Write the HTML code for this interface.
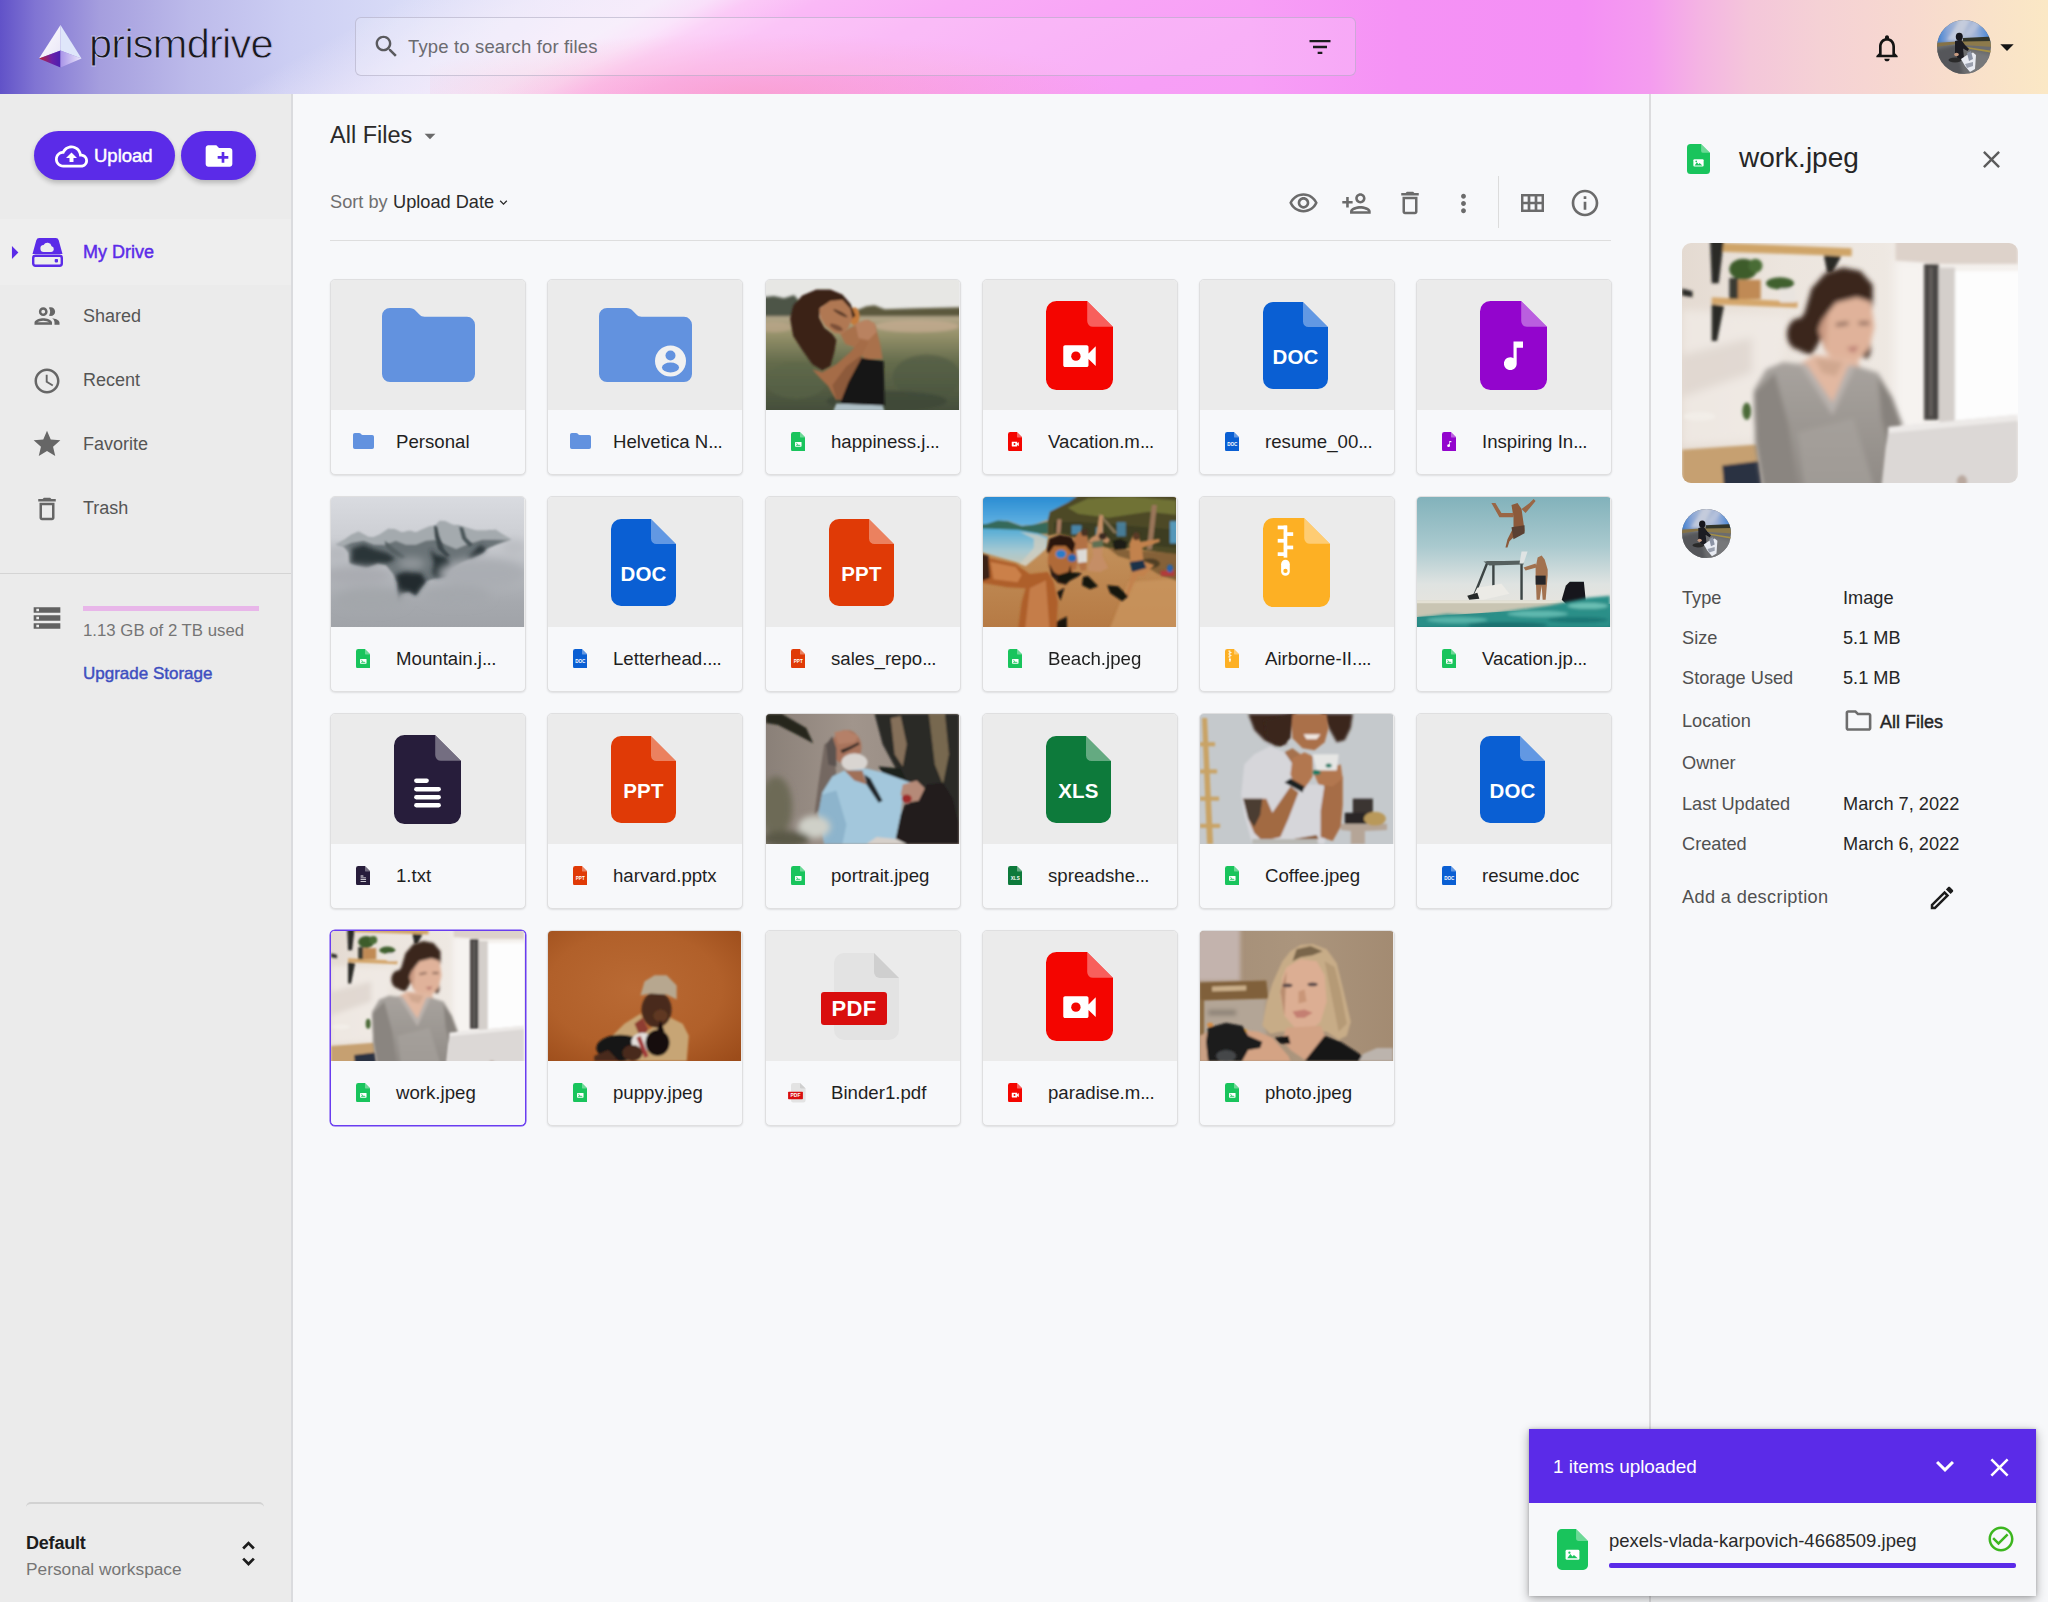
<!DOCTYPE html>
<html lang="en"><head><meta charset="utf-8"><title>prismdrive - All Files</title>
<style>
*{box-sizing:border-box;margin:0;padding:0}
html,body{width:2048px;height:1602px;overflow:hidden;background:#f7f8fa}
body{position:relative;font-family:"Liberation Sans",sans-serif;color:#212121}
.ab{position:absolute;display:block}
.t{white-space:nowrap}
.md{-webkit-text-stroke:.45px currentColor}
#hdr{left:0;top:0;width:2048px;height:94px;overflow:hidden;
 background:linear-gradient(90deg,#6152c8 0px,#8074d3 35px,#a59ede 100px,#bcbaea 190px,#cccef3 290px,#d8dbf7 400px,#e4e4f9 520px,#eeeafb 640px,#f3eefb 800px)}
#hdr .sk{left:400px;top:0;width:1100px;height:94px;transform-origin:0 0;transform:skewX(-61deg);
 background:linear-gradient(90deg,rgba(246,236,251,0) 0px,rgba(246,238,251,.55) 130px,rgba(247,236,251,.9) 260px,#f9e0fa 310px,#fbcaf7 350px,#fab9f6 420px,#f9adf6 560px,#f8a5f6 720px,#f79ff6 900px,#f69df6 1100px)}
#hdr .rt{left:1250px;top:0;width:798px;height:94px;
 background:linear-gradient(90deg,#f79ff6 0px,#f592f5 150px,#f48ff5 330px,#f49cef 400px,#f4b4e3 450px,#f4c6da 500px,#f5d1d5 570px,#f7d9cf 660px,#f9e2c9 740px,#fbe8c5 798px)}
#side{left:0;top:94px;width:293px;height:1508px;background:#ebebeb;border-right:2px solid #dadbde}
#rp{left:1649px;top:94px;width:399px;height:1508px;border-left:2px solid #dcdcde;background:#f7f8fa}
.card{position:absolute;width:196px;height:196px;border:1.5px solid #dfdfe0;border-radius:5px;background:#f7f8fa;overflow:hidden;box-shadow:0 1px 2px rgba(0,0,0,.10)}
.card.sel{border-color:#6a3df0;box-shadow:0 0 0 .5px #6a3df0}
.card .th,.card .ph{position:absolute;left:0;top:0;width:100%;height:130px;background:#ebebeb;overflow:hidden}
.card .ph svg{display:block}
.card>.ab{margin:-1.5px 0 0 -1.5px}
.nm{font-size:18.650px;line-height:24px;color:#1f1f1f}
.nm i{font-style:normal;letter-spacing:-.6px}
.lb{color:#555}
</style></head><body>

<div id="hdr" class="ab">
<div class="ab sk"></div><div class="ab rt"></div><div class="ab" style="left:430px;top:30px;width:800px;height:64px;background:radial-gradient(ellipse 46% 95% at 40% 100%,rgba(250,150,185,.55),rgba(250,150,190,0) 100%)"></div>
</div>
<svg class="ab" style="left:39px;top:25px" width="43" height="43" viewBox="0 0 43 43">
<defs><linearGradient id="lg1" x1="0" y1="0" x2="1" y2="1"><stop offset="0" stop-color="#ffffff"/><stop offset="1" stop-color="#e9e6f7"/></linearGradient>
<linearGradient id="lg2" x1="0" y1="0" x2="1" y2="0"><stop offset="0" stop-color="#c0242c"/><stop offset=".6" stop-color="#6a1fa8"/><stop offset="1" stop-color="#4a1fb0"/></linearGradient>
<linearGradient id="lg3" x1="0" y1="0" x2="1" y2="0"><stop offset="0" stop-color="#a894e8"/><stop offset="1" stop-color="#ece8fb"/></linearGradient></defs>
<path d="M21.5 0L0 33.500 21.500 25.500z" fill="url(#lg1)"/><path d="M21.5 0L42.500 33.500 21.500 25.500z" fill="#dfe6fa"/>
<path d="M0 33.5L21.5 25.5V42.500z" fill="url(#lg2)"/><path d="M42.5 33.5L21.5 25.5V42.500z" fill="url(#lg3)"/></svg>
<div class="ab t" style="left:89px;top:17px;font-size:41.5px;line-height:54px;letter-spacing:-.75px;color:#19191c;-webkit-text-stroke:.8px #c2c0ec">prismdrive</div>
<div class="ab" style="left:355px;top:17px;width:1001px;height:59px;border:1.5px solid rgba(170,165,190,.55);border-radius:6px;background:rgba(255,255,255,.18)"></div>
<svg class="ab" style="left:371.5px;top:32.0px" width="29" height="29" viewBox="0 0 24 24" ><path fill="#5a5a5e" d="M15.5 14h-.79l-.28-.27C15.41 12.59 16 11.11 16 9.5 16 5.91 13.09 3 9.5 3S3 5.91 3 9.5 5.91 16 9.5 16c1.61 0 3.09-.59 4.23-1.57l.27.28v.79l5 4.99L20.49 19l-4.99-5zm-6 0C7.01 14 5 11.99 5 9.5S7.01 5 9.5 5 14 7.01 14 9.5 11.99 14 9.5 14z"/></svg>
<div class="ab t " style="left:408px;top:35.0px;font-size:18.5px;line-height:24px;color:#6b6b70;letter-spacing:.15px">Type to search for files</div>
<svg class="ab" style="left:1306.0px;top:33.0px" width="28" height="28" viewBox="0 0 24 24" ><path fill="#1c1c1c" d="M10 18h4v-2h-4v2zM3 6v2h18V6H3zm3 7h12v-2H6v2z"/></svg>
<svg class="ab" style="left:1870.5px;top:32.0px" width="32" height="32" viewBox="0 0 24 24" ><path fill="#141414" d="M12 22c1.1 0 2-.9 2-2h-4c0 1.1.9 2 2 2zm6-6v-5c0-3.07-1.63-5.64-4.5-6.32V4c0-.83-.67-1.5-1.5-1.5s-1.5.67-1.5 1.5v.68C7.64 5.36 6 7.92 6 11v5l-2 2v1h16v-1l-2-2zm-2 1H8v-6c0-2.48 1.51-4.5 4-4.5s4 2.02 4 4.5v6z"/></svg>
<div class="ab" style="left:1937px;top:20px;width:54px;height:54px;border-radius:50%;overflow:hidden"><svg width="54" height="54" viewBox="0 0 54 54" preserveAspectRatio="none" style="display:block"><defs><linearGradient id="g1" x1="0" y1="0" x2="1" y2="0"><stop offset="0" stop-color="#2f78d0"/><stop offset="0.22" stop-color="#8aa6d6"/><stop offset="0.45" stop-color="#b4bed2"/><stop offset="0.7" stop-color="#9fb2d8"/><stop offset="1" stop-color="#2f7ad4"/></linearGradient><filter id="f2" x="-20%" y="-20%" width="140%" height="140%"><feGaussianBlur stdDeviation="0.6"/></filter><filter id="f3" x="-20%" y="-20%" width="140%" height="140%"><feGaussianBlur stdDeviation="1.6"/></filter></defs><rect x="0" y="0" width="54" height="54" fill="#6b6c6e" /><g filter="url(#f3)"><rect x="-2" y="-2" width="58" height="25" fill="url(#g1)" /><polygon points="10,20 24,-2 34,-2 22,20" fill="#c9d0de" opacity=".8"/><polygon points="26,16 40,-2 48,-2 34,16" fill="#c2cade" opacity=".6"/><polygon points="-2,30 20,25 26,56 -2,56" fill="#55565a" /><polygon points="30,30 56,36 56,56 34,56" fill="#77787a" /></g><g filter="url(#f2)"><polygon points="24,20.500 56,19.500 56,27 26,25" fill="#8c7a4b" /><polygon points="26,18 56,16.500 56,21 26,21.500" fill="#333629" /><polygon points="-2,23 20,21.500 20,24 -2,27" fill="#857246" /><polygon points="30,27 56,31 56,33 30,28.500" fill="#b59a3a" opacity=".8"/><ellipse cx="22.3" cy="16.8" rx="3.5" ry="4" fill="#15151b" /><polygon points="18,21 24,19.500 28,25 32,29 30.500,31 26,28.500 27,38 22,41 18,33" fill="#1a1a20" /><ellipse cx="19.5" cy="34.5" rx="2.3" ry="1.8" fill="#c79a80" /><ellipse cx="18" cy="40" rx="6.5" ry="2.4" fill="#2a2b2c" /><polygon points="24,39 30,35 36,32.500 39,35 38,49 33,52 28,46" fill="#e8ebf2" /><polygon points="30,33 34,31 36,39 32,41" fill="#8b93a5" /><polygon points="28,44 36,42 36,46 30,48" fill="#9aa0ae" /></g></svg></div>
<svg class="ab" style="left:1991.3px;top:31.3px" width="32" height="32" viewBox="0 0 24 24" ><path fill="#141414" d="M7 10l5 5 5-5z"/></svg>
<div id="side" class="ab"></div>
<div class="ab" style="left:34px;top:131px;width:141px;height:49px;border-radius:25px;background:#5b2be8;box-shadow:0 3px 5px rgba(0,0,0,.22)"></div>
<svg class="ab" style="left:55.0px;top:139.5px" width="33" height="33" viewBox="0 0 24 24" ><path fill="#fff" d="M19.35 10.04C18.67 6.59 15.64 4 12 4 9.11 4 6.6 5.64 5.35 8.04 2.34 8.36 0 10.91 0 14c0 3.31 2.69 6 6 6h13c2.76 0 5-2.24 5-5 0-2.64-2.05-4.78-4.65-4.96zM19 18H6c-2.21 0-4-1.79-4-4 0-2.05 1.53-3.76 3.56-3.97l1.07-.11.5-.95C8.08 7.14 9.94 6 12 6c2.62 0 4.88 1.86 5.39 4.43l.3 1.5 1.53.11c1.56.1 2.78 1.41 2.78 2.96 0 1.65-1.35 3-3 3zM8 13h2.55v3h2.9v-3H16l-4-4z"/></svg>
<div class="ab t md" style="left:94px;top:144.0px;font-size:18.5px;line-height:24px;color:#fff;">Upload</div>
<div class="ab" style="left:181px;top:131px;width:75px;height:49px;border-radius:25px;background:#5b2be8;box-shadow:0 3px 5px rgba(0,0,0,.22)"></div>
<svg class="ab" style="left:202.5px;top:140.0px" width="32" height="32" viewBox="0 0 24 24" ><path fill="#fff" d="M20 6h-8l-2-2H4c-1.11 0-1.99.89-1.99 2L2 18c0 1.11.89 2 2 2h16c1.11 0 2-.89 2-2V8c0-1.11-.89-2-2-2zm-1 8h-3v3h-2v-3h-3v-2h3V9h2v3h3v2z"/></svg>
<div class="ab" style="left:0;top:219px;width:291px;height:66px;background:#eeeeee"></div>
<svg class="ab" style="left:-0.7px;top:237.0px" width="31" height="31" viewBox="0 0 24 24" ><path fill="#5b2be8" d="M10 17l5-5-5-5v10z"/></svg>
<svg class="ab" style="left:32px;top:238px" width="31" height="29" viewBox="0 0 31 29">
<path fill="#5b2be8" d="M7.2 0h16.600a3 3 0 0 1 2.900 2.200L30.500 16H.5L4.300 2.200A3 3 0 0 1 7.200 0z"/>
<path fill="#eeeeee" d="M19.6 8.200a4.300 4.300 0 0 0-8-1.100A3.400 3.400 0 0 0 12 13.900h7.300a2.900 2.900 0 0 0 .3-5.700z"/>
<rect x="1.2" y="17.700" width="28.600" height="10" rx="2.200" fill="none" stroke="#5b2be8" stroke-width="2.400"/>
<rect x="22.7" y="21.100" width="3.300" height="3.300" rx=".8" fill="#5b2be8"/></svg>
<div class="ab t md" style="left:83px;top:240.5px;font-size:18px;line-height:23px;color:#5b2be8;">My Drive</div>
<svg class="ab" style="left:31.5px;top:301.0px" width="30" height="30" viewBox="0 0 24 24" ><path fill="#666" d="M9 13.75c-2.34 0-7 1.17-7 3.5V19h14v-1.75c0-2.33-4.66-3.5-7-3.5zM4.34 17c.84-.58 2.87-1.25 4.66-1.25s3.82.67 4.66 1.25H4.34zM9 12c1.93 0 3.5-1.57 3.5-3.5S10.93 5 9 5 5.5 6.57 5.5 8.5 7.07 12 9 12zm0-5c.83 0 1.5.67 1.5 1.5S9.83 10 9 10s-1.5-.67-1.5-1.5S8.17 7 9 7zm7.04 6.81c1.16.84 1.96 1.96 1.96 3.44V19h4v-1.75c0-2.02-3.5-3.17-5.96-3.44zM15 12c1.93 0 3.5-1.57 3.5-3.5S16.93 5 15 5c-.54 0-1.04.13-1.5.35.63.89 1 1.98 1 3.15s-.37 2.26-1 3.15c.46.22.96.35 1.5.35z"/></svg>
<div class="ab t " style="left:83px;top:304.5px;font-size:18px;line-height:23px;color:#555;">Shared</div>
<svg class="ab" style="left:31.5px;top:365.5px" width="30" height="30" viewBox="0 0 24 24" ><path fill="#666" d="M11.99 2C6.47 2 2 6.48 2 12s4.47 10 9.99 10C17.52 22 22 17.52 22 12S17.52 2 11.99 2zM12 20c-4.42 0-8-3.58-8-8s3.58-8 8-8 8 3.58 8 8-3.58 8-8 8zm.5-13H11v6l5.25 3.15.75-1.23-4.5-2.67z"/></svg>
<div class="ab t " style="left:83px;top:368.5px;font-size:18px;line-height:23px;color:#555;">Recent</div>
<svg class="ab" style="left:30.5px;top:428.0px" width="32" height="32" viewBox="0 0 24 24" ><path fill="#666" d="M12 17.27L18.18 21l-1.64-7.03L22 9.24l-7.19-.61L12 2 9.19 8.63 2 9.24l5.46 4.73L5.82 21z"/></svg>
<div class="ab t " style="left:83px;top:432.5px;font-size:18px;line-height:23px;color:#555;">Favorite</div>
<svg class="ab" style="left:31.5px;top:493.5px" width="30" height="30" viewBox="0 0 24 24" ><path fill="#666" d="M6 19c0 1.1.9 2 2 2h8c1.1 0 2-.9 2-2V7H6v12zM8 9h8v10H8V9zm7.5-5l-1-1h-5l-1 1H5v2h14V4z"/></svg>
<div class="ab t " style="left:83px;top:496.5px;font-size:18px;line-height:23px;color:#555;">Trash</div>
<div class="ab" style="left:0;top:572.5px;width:291px;height:1.500px;background:#d4d4d4"></div>
<svg class="ab" style="left:30.5px;top:602.0px" width="32" height="32" viewBox="0 0 24 24" ><path fill="#616161" d="M2 20h20v-4H2v4zm2-3h2v2H4v-2zM2 4v4h20V4H2zm4 3H4V5h2v2zm-4 7h20v-4H2v4zm2-3h2v2H4v-2z"/></svg>
<div class="ab" style="left:83px;top:606px;width:176px;height:4.500px;background:#e8b6e9"></div>
<div class="ab t " style="left:83px;top:619.5px;font-size:16.8px;line-height:22px;color:#757575;">1.13 GB of 2 TB used</div>
<div class="ab t md" style="left:83px;top:662.5px;font-size:17px;line-height:22px;color:#3f4fc0;">Upgrade Storage</div>
<div class="ab" style="left:26px;top:1501.500px;width:238px;height:8px;border-top:2px solid #d2d2d2;border-radius:5px 5px 0 0"></div>
<div class="ab t " style="left:26px;top:1531.5px;font-size:18px;line-height:23px;color:#1c1c1c;font-weight:700;letter-spacing:-.2px">Default</div>
<div class="ab t " style="left:26px;top:1557.5px;font-size:17.3px;line-height:22px;color:#757575;">Personal workspace</div>
<svg class="ab" style="left:232.0px;top:1536.5px" width="33" height="33" viewBox="0 0 24 24" ><path fill="#1c1c1c" d="M12 5.83L15.17 9l1.41-1.41L12 3 7.41 7.59 8.83 9 12 5.83zm0 12.34L8.83 15l-1.41 1.41L12 21l4.59-4.59L15.17 15 12 18.17z"/></svg>
<div class="ab t " style="left:330px;top:119.8px;font-size:23.5px;line-height:31px;color:#2a2a2a;">All Files</div>
<svg class="ab" style="left:416.5px;top:123.0px" width="26" height="26" viewBox="0 0 24 24" ><path fill="#6a6a6a" d="M7 10l5 5 5-5z"/></svg>
<div class="ab t " style="left:330px;top:190.0px;font-size:18.2px;line-height:24px;color:#6f6f6f;">Sort by</div>
<div class="ab t " style="left:393px;top:190.0px;font-size:18.2px;line-height:24px;color:#2a2a2a;">Upload Date</div>
<svg class="ab" style="left:496.0px;top:194.5px" width="15" height="15" viewBox="0 0 24 24" ><path fill="#2a2a2a" d="M7.41 8.59L12 13.17l4.59-4.58L18 10l-6 6-6-6 1.41-1.41z"/></svg>
<svg class="ab" style="left:1287.5px;top:187.8px" width="31" height="31" viewBox="0 0 24 24" ><path fill="#6b6b6b" d="M12 6c3.79 0 7.17 2.13 8.82 5.5C19.17 14.87 15.79 17 12 17s-7.17-2.13-8.82-5.5C4.83 8.13 8.21 6 12 6m0-2C7 4 2.73 7.11 1 11.5 2.73 15.89 7 19 12 19s9.27-3.11 11-7.5C21.27 7.11 17 4 12 4zm0 5c1.38 0 2.5 1.12 2.5 2.5S13.38 14 12 14s-2.5-1.12-2.5-2.5S10.62 9 12 9m0-2c-2.48 0-4.5 2.02-4.5 4.5S9.52 16 12 16s4.5-2.02 4.5-4.5S14.48 7 12 7z"/></svg>
<svg class="ab" style="left:1340.5px;top:187.8px" width="31" height="31" viewBox="0 0 24 24" ><path fill="#6b6b6b" d="M15 12c2.21 0 4-1.79 4-4s-1.79-4-4-4-4 1.79-4 4 1.79 4 4 4zm0-6c1.1 0 2 .9 2 2s-.9 2-2 2-2-.9-2-2 .9-2 2-2zm0 8c-2.67 0-8 1.34-8 4v2h16v-2c0-2.66-5.33-4-8-4zm-6 4c.22-.72 3.31-2 6-2 2.7 0 5.8 1.29 6 2H9zm-3-3v-3h3v-2H6V7H4v3H1v2h3v3z"/></svg>
<svg class="ab" style="left:1395.0px;top:188.3px" width="30" height="30" viewBox="0 0 24 24" ><path fill="#6b6b6b" d="M6 19c0 1.1.9 2 2 2h8c1.1 0 2-.9 2-2V7H6v12zM8 9h8v10H8V9zm7.5-5l-1-1h-5l-1 1H5v2h14V4z"/></svg>
<svg class="ab" style="left:1448.5px;top:188.8px" width="29" height="29" viewBox="0 0 24 24" ><path fill="#6b6b6b" d="M12 8c1.1 0 2-.9 2-2s-.9-2-2-2-2 .9-2 2 .9 2 2 2zm0 2c-1.1 0-2 .9-2 2s.9 2 2 2 2-.9 2-2-.9-2-2-2zm0 6c-1.1 0-2 .9-2 2s.9 2 2 2 2-.9 2-2-.9-2-2-2z"/></svg>
<div class="ab" style="left:1497.500px;top:176px;width:1.500px;height:52px;background:#dcdcdc"></div>
<svg class="ab" style="left:1520.500px;top:193.500px" width="23" height="18" viewBox="0 0 23 18"><g fill="none" stroke="#6b6b6b" stroke-width="2.700"><rect x="1.1" y="1.1" width="20.800" height="15.800"/><path d="M1 9h21M8 1v16M15 1v16"/></g></svg>
<svg class="ab" style="left:1569.0px;top:187.3px" width="32" height="32" viewBox="0 0 24 24" ><path fill="#6b6b6b" d="M11 7h2v2h-2zm0 4h2v6h-2zm1-9C6.48 2 2 6.48 2 12s4.48 10 10 10 10-4.48 10-10S17.52 2 12 2zm0 18c-4.41 0-8-3.59-8-8s3.59-8 8-8 8 3.59 8 8-3.59 8-8 8z"/></svg>
<div class="ab" style="left:330px;top:239.500px;width:1281px;height:1.500px;background:#dedede"></div>
<div class="card" style="left:330px;top:279px"><div class="th"></div><svg class="ab" style="left:52.3px;top:29.3px" width="93" height="74" viewBox="0 0 93 74" preserveAspectRatio="none"><path fill="#6292df" d="M0 8a8 8 0 0 1 8-8h19.5c2.4 0 4.6 1 6.2 2.700l3.700 3.900c1.300 1.400 3.200 2.200 5.100 2.200H85a8 8 0 0 1 8 8V66a8 8 0 0 1-8 8H8a8 8 0 0 1-8-8z"/></svg><svg class="ab" style="left:23px;top:154.500px" width="21" height="16" viewBox="0 0 93 74" preserveAspectRatio="none"><path fill="#6292df" d="M0 8a8 8 0 0 1 8-8h19.5c2.4 0 4.6 1 6.2 2.700l3.700 3.900c1.300 1.400 3.200 2.200 5.100 2.200H85a8 8 0 0 1 8 8V66a8 8 0 0 1-8 8H8a8 8 0 0 1-8-8z"/></svg><div class="ab t nm" style="left:66.500px;top:151px">Personal</div></div>
<div class="card" style="left:547px;top:279px"><div class="th"></div><svg class="ab" style="left:52.3px;top:29.3px" width="93" height="74" viewBox="0 0 93 74" preserveAspectRatio="none"><path fill="#6292df" d="M0 8a8 8 0 0 1 8-8h19.5c2.4 0 4.6 1 6.2 2.700l3.700 3.900c1.300 1.400 3.200 2.200 5.100 2.200H85a8 8 0 0 1 8 8V66a8 8 0 0 1-8 8H8a8 8 0 0 1-8-8z"/><circle cx="71.5" cy="53" r="15.500" fill="#f1f1f1"/><circle cx="71.5" cy="47.500" r="5" fill="#6292df"/><ellipse cx="71.5" cy="59.5" rx="8.5" ry="5" fill="#6292df"/></svg><svg class="ab" style="left:23px;top:154.500px" width="21" height="16" viewBox="0 0 93 74" preserveAspectRatio="none"><path fill="#6292df" d="M0 8a8 8 0 0 1 8-8h19.5c2.4 0 4.6 1 6.2 2.700l3.700 3.900c1.300 1.400 3.200 2.200 5.100 2.200H85a8 8 0 0 1 8 8V66a8 8 0 0 1-8 8H8a8 8 0 0 1-8-8z"/></svg><div class="ab t nm" style="left:66.500px;top:151px">Helvetica N<i>...</i></div></div>
<div class="card" style="left:765px;top:279px"><div class="ph"><svg width="193" height="130" viewBox="0 0 192 129" preserveAspectRatio="none" style="display:block"><defs><linearGradient id="g4" x1="0" y1="0" x2="0" y2="1"><stop offset="0" stop-color="#b3a68a"/><stop offset="0.18" stop-color="#95916a"/><stop offset="0.45" stop-color="#656c4c"/><stop offset="1" stop-color="#404a38"/></linearGradient><filter id="f5" x="-20%" y="-20%" width="140%" height="140%"><feGaussianBlur stdDeviation="1.4"/></filter><filter id="f6" x="-20%" y="-20%" width="140%" height="140%"><feGaussianBlur stdDeviation="1.0"/></filter></defs><rect x="0" y="0" width="192" height="129" fill="#e7e7e4" /><g filter="url(#f5)"><polygon points="-4,17 8,16 18,18 28,15 34,22 36,40 -4,40" fill="#4d5546" /><polygon points="90,30 100,26 108,25 118,29 150,28 196,27 196,42 90,42" fill="#5c583d" /><rect x="-5" y="36" width="202" height="100" fill="url(#g4)" /><ellipse cx="150" cy="46" rx="42" ry="6" fill="#c4ab90" opacity=".75"/><ellipse cx="8" cy="47" rx="18" ry="5" fill="#bfa98c" opacity=".6"/><ellipse cx="30" cy="100" rx="30" ry="18" fill="#5a6548" opacity=".5"/><ellipse cx="160" cy="96" rx="34" ry="22" fill="#4c5842" opacity=".55"/><ellipse cx="120" cy="120" rx="60" ry="10" fill="#3a4436" opacity=".6"/></g><g filter="url(#f6)"><ellipse cx="88" cy="36" rx="5" ry="9" fill="#c57a3a" /><polygon points="74.0,53.5 84.0,47.5 94.0,42.5 102.0,39.5 109.0,45.5 111.0,53.5 114.0,65.5 116.0,78.5 98.0,78.5 90.0,67.5 79.0,63.5" fill="#a9714c" /><polygon points="24.0,38.5 27.0,25.5 36.0,15.5 50.0,9.5 64.0,9.5 76.0,14.5 84.0,23.5 89.0,35.5 84.0,39.5 79.0,28.5 64.0,21.5 54.0,27.5 53.0,37.5 58.0,47.5 66.0,53.5 70.0,59.5 68.0,71.5 64.0,85.5 56.0,89.5 46.0,83.5 36.0,69.5 27.0,55.5" fill="#3a2318" /><polygon points="53.0,28.5 64.0,20.5 76.0,19.5 84.0,28.5 86.0,37.5 82.0,47.5 76.0,53.5 68.0,52.5 59.0,45.5 54.0,37.5" fill="#b07853" /><polygon points="89.0,43.5 99.0,39.5 108.0,42.5 110.0,51.5 102.0,59.5 92.0,57.5" fill="#b98260" /><polygon points="46.0,88.5 56.0,91.5 70.0,83.5 84.0,71.5 94.0,59.5 102.0,61.5 95.0,75.5 84.0,93.5 74.0,113.5 70.0,119.5 62.0,105.5 54.0,97.5" fill="#a56c47" /><polygon points="66.0,104.5 80.0,85.5 94.0,75.5 97.0,81.5 84.0,99.5 79.0,119.5 70.0,118.5" fill="#8d5a3b" /><polygon points="95.0,77.5 117.0,80.5 118.0,124.5 77.0,125.5 74.0,121.5 82.0,101.5" fill="#161614" /><polygon points="67.0,130.0 70.0,122.5 116.0,124.5 118.0,130.0" fill="#aebfc6" /><ellipse cx="70" cy="47" rx="7" ry="2.5" fill="#5a3526" opacity=".6" transform="rotate(25 70 47)"/><ellipse cx="74" cy="33" rx="8" ry="1.6" fill="#3a2318" opacity=".7" transform="rotate(28 74 33)"/></g></svg></div><svg class="ab" style="left:26.0px;top:153.3px" width="14.6" height="19.5" viewBox="0 0 14.6 19.5"><path fill="#19c45c" d="M2.26 0H8.98L14.6 5.62V17.24a2.26 2.26 0 0 1-2.26 2.26H2.26a2.26 2.26 0 0 1-2.26-2.26V2.26a2.26 2.26 0 0 1 2.26-2.26z"/><path fill="#fff" fill-opacity=".36" d="M8.98 0L14.6 5.62H10.22a1.24 1.24 0 0 1-1.24-1.24z"/><rect x="4.04" y="9.93" width="6.51" height="4.72" rx="0.67" fill="#fff"/><path fill="#19c45c" d="M4.83 13.86l1.46 -1.91 1.01 1.12 0.67 -0.67 1.80 1.46z"/><circle cx="5.84" cy="11.27" r="0.54" fill="#19c45c"/></svg><div class="ab t nm" style="left:66.500px;top:151px">happiness.j<i>...</i></div></div>
<div class="card" style="left:982px;top:279px"><div class="th"></div><svg class="ab" style="left:64.5px;top:22.1px" width="67" height="89" viewBox="0 0 67 89"><path fill="#f40500" d="M10.38 0H41.20L67 25.80V78.61a10.38 10.38 0 0 1-10.38 10.38H10.38a10.38 10.38 0 0 1-10.38-10.38V10.38a10.38 10.38 0 0 1 10.38-10.38z"/><path fill="#fff" fill-opacity=".36" d="M41.20 0L67 25.80H46.92a5.71 5.71 0 0 1-5.71-5.71z"/><svg x="11.85" y="33.53" width="43.29" height="43.29" viewBox="0 0 24 24"><path fill="#fff" d="M17 10.5V7c0-.55-.45-1-1-1H4c-.55 0-1 .45-1 1v10c0 .55.45 1 1 1h12c.55 0 1-.45 1-1v-3.5l4 4v-11l-4 4z"/><circle cx="10" cy="12" r="2.6" fill="#f40500"/></svg></svg><svg class="ab" style="left:26.0px;top:153.3px" width="14.6" height="19.5" viewBox="0 0 14.6 19.5"><path fill="#f40500" d="M2.26 0H8.98L14.6 5.62V17.24a2.26 2.26 0 0 1-2.26 2.26H2.26a2.26 2.26 0 0 1-2.26-2.26V2.26a2.26 2.26 0 0 1 2.26-2.26z"/><path fill="#fff" fill-opacity=".36" d="M8.98 0L14.6 5.62H10.22a1.24 1.24 0 0 1-1.24-1.24z"/><svg x="2.58" y="7.37" width="9.43" height="9.43" viewBox="0 0 24 24"><path fill="#fff" d="M17 10.5V7c0-.55-.45-1-1-1H4c-.55 0-1 .45-1 1v10c0 .55.45 1 1 1h12c.55 0 1-.45 1-1v-3.5l4 4v-11l-4 4z"/><circle cx="10" cy="12" r="2.6" fill="#f40500"/></svg></svg><div class="ab t nm" style="left:66.500px;top:151px">Vacation.m<i>...</i></div></div>
<div class="card" style="left:1199px;top:279px"><div class="th"></div><svg class="ab" style="left:64.7px;top:23.7px" width="65" height="87" viewBox="0 0 65 87"><path fill="#0a5fd3" d="M10.07 0H39.97L65 25.03V76.92a10.07 10.07 0 0 1-10.07 10.07H10.07a10.07 10.07 0 0 1-10.07-10.07V10.07a10.07 10.07 0 0 1 10.07-10.07z"/><path fill="#fff" fill-opacity=".36" d="M39.97 0L65 25.03H45.52a5.54 5.54 0 0 1-5.54-5.54z"/><text x="32.50" y="62.20" text-anchor="middle" font-family="Liberation Sans, sans-serif" font-weight="700" font-size="20.50" fill="#fff" letter-spacing="0.20">DOC</text></svg><svg class="ab" style="left:26.0px;top:153.3px" width="14.6" height="19.5" viewBox="0 0 14.6 19.5"><path fill="#0a5fd3" d="M2.26 0H8.98L14.6 5.62V17.24a2.26 2.26 0 0 1-2.26 2.26H2.26a2.26 2.26 0 0 1-2.26-2.26V2.26a2.26 2.26 0 0 1 2.26-2.26z"/><path fill="#fff" fill-opacity=".36" d="M8.98 0L14.6 5.62H10.22a1.24 1.24 0 0 1-1.24-1.24z"/><text x="7.30" y="13.94" text-anchor="middle" font-family="Liberation Sans, sans-serif" font-weight="700" font-size="4.60" fill="#fff" letter-spacing="0.04">DOC</text></svg><div class="ab t nm" style="left:66.500px;top:151px">resume_00<i>...</i></div></div>
<div class="card" style="left:1416px;top:279px"><div class="th"></div><svg class="ab" style="left:64.5px;top:22.1px" width="67" height="89" viewBox="0 0 67 89"><path fill="#9305cd" d="M10.38 0H41.20L67 25.80V78.61a10.38 10.38 0 0 1-10.38 10.38H10.38a10.38 10.38 0 0 1-10.38-10.38V10.38a10.38 10.38 0 0 1 10.38-10.38z"/><path fill="#fff" fill-opacity=".36" d="M41.20 0L67 25.80H46.92a5.71 5.71 0 0 1-5.71-5.71z"/><svg x="14.43" y="35.67" width="38.14" height="38.14" viewBox="0 0 24 24"><path fill="#fff" d="M12 3v10.55c-.59-.34-1.27-.55-2-.55-2.21 0-4 1.79-4 4s1.79 4 4 4 4-1.79 4-4V7h4V3h-6z"/></svg></svg><svg class="ab" style="left:26.0px;top:153.3px" width="14.6" height="19.5" viewBox="0 0 14.6 19.5"><path fill="#9305cd" d="M2.26 0H8.98L14.6 5.62V17.24a2.26 2.26 0 0 1-2.26 2.26H2.26a2.26 2.26 0 0 1-2.26-2.26V2.26a2.26 2.26 0 0 1 2.26-2.26z"/><path fill="#fff" fill-opacity=".36" d="M8.98 0L14.6 5.62H10.22a1.24 1.24 0 0 1-1.24-1.24z"/><svg x="3.14" y="7.84" width="8.31" height="8.31" viewBox="0 0 24 24"><path fill="#fff" d="M12 3v10.55c-.59-.34-1.27-.55-2-.55-2.21 0-4 1.79-4 4s1.79 4 4 4 4-1.79 4-4V7h4V3h-6z"/></svg></svg><div class="ab t nm" style="left:66.500px;top:151px">Inspiring In<i>...</i></div></div>
<div class="card" style="left:330px;top:496px"><div class="ph"><svg width="193" height="130" viewBox="0 0 192 129" preserveAspectRatio="none" style="display:block"><defs><linearGradient id="g7" x1="0" y1="0" x2="0" y2="1"><stop offset="0" stop-color="#d9dbe0"/><stop offset="0.3" stop-color="#cdcfd4"/><stop offset="0.55" stop-color="#b7babf"/><stop offset="0.8" stop-color="#a6a9ae"/><stop offset="1" stop-color="#a0a3a8"/></linearGradient><filter id="f8" x="-20%" y="-20%" width="140%" height="140%"><feGaussianBlur stdDeviation="1.3"/></filter><filter id="f9" x="-20%" y="-20%" width="140%" height="140%"><feGaussianBlur stdDeviation="4"/></filter><filter id="f10" x="-20%" y="-20%" width="140%" height="140%"><feGaussianBlur stdDeviation="2.2"/></filter></defs><rect x="0" y="0" width="192" height="129" fill="url(#g7)" /><g filter="url(#f8)"><polygon points="4.5,47.5 13.5,42.5 20.5,37.5 27.5,34.5 36.5,39.5 41.5,40.5 48.5,37.5 57.5,31.5 64.5,32.5 70.5,35.5 78.5,33.5 84.5,35.5 90.5,32.5 97.5,29.5 103.5,28.5 108.5,23.5 114.5,24.5 120.5,27.5 128.5,28.5 134.5,30.5 144.5,33.5 154.5,33.5 163.5,32.5 169.5,36.5 179.5,42.5 164.5,47.5 154.5,51.5 150.5,55.5 138.5,61.5 129.5,65.5 119.5,71.5 114.5,78.5 104.5,80.5 94.5,83.5 88.5,91.5 84.5,97.5 77.5,93.5 69.5,95.5 66.5,103.5 66.5,85.5 62.5,77.5 54.5,67.5 46.5,65.5 36.5,69.5 24.5,67.5 18.5,65.5 17.5,55.5 12.5,49.5" fill="#6b7377" /><polygon points="4.5,47.5 13.5,42.5 20.5,37.5 27.5,34.5 36.5,39.5 41.5,40.5 48.5,37.5 57.5,31.5 64.5,32.5 70.5,35.5 78.5,33.5 84.5,35.5 90.5,32.5 97.5,29.5 103.5,28.5 108.5,23.5 114.5,24.5 120.5,27.5 128.5,28.5 134.5,30.5 144.5,33.5 154.5,33.5 163.5,32.5 169.5,36.5 179.5,42.5 164.5,42.5 150.5,42.5 134.5,47.5 124.5,51.5 114.5,47.5 104.5,42.5 94.5,43.5 84.5,47.5 74.5,47.5 64.5,43.5 54.5,47.5 42.5,47.5 32.5,43.5 20.5,45.5 12.5,48.5" fill="#a4aaae" /></g><g filter="url(#f10)"><polygon points="19.5,51.5 32.5,47.5 42.5,51.5 56.5,55.5 64.5,61.5 56.5,65.5 46.5,65.5 34.5,69.5 20.5,65.5" fill="#2b3438" /><polygon points="64.5,77.5 74.5,73.5 89.5,75.5 94.5,83.5 88.5,91.5 84.5,97.5 77.5,93.5 69.5,95.5 67.5,103.5 66.5,85.5" fill="#222b2f" /><polygon points="98.5,51.5 104.5,57.5 114.5,59.5 119.5,67.5 114.5,78.5 104.5,80.5 100.5,75.5 102.5,65.5" fill="#263034" /><polygon points="136.5,59.5 148.5,47.5 154.5,51.5 150.5,55.5 138.5,61.5" fill="#2b3438" /></g><g filter="url(#f8)"><polygon points="102.5,28.5 105.5,29.5 107.5,38.5 112.5,51.5 118.5,58.5 114.5,59.5 106.5,51.5 103.5,39.5" fill="#3d474b" /><polygon points="53.5,43.5 58.5,47.5 66.5,53.5 74.5,59.5 70.5,61.5 60.5,55.5 54.5,49.5" fill="#566064" /><polygon points="127.5,29.5 131.5,30.5 134.5,40.5 141.5,47.5 137.5,49.5 130.5,41.5" fill="#4a5458" /></g><g filter="url(#f9)"><ellipse cx="26" cy="78" rx="34" ry="9" fill="#a8abb0" opacity=".9"/><ellipse cx="6" cy="56" rx="12" ry="8" fill="#b4b7bc" opacity=".8"/><ellipse cx="80" cy="66" rx="14" ry="6" fill="#9ca1a5" opacity=".8"/><ellipse cx="150" cy="76" rx="44" ry="15" fill="#aaadb2" opacity=".95"/><ellipse cx="125" cy="98" rx="34" ry="10" fill="#a4a7ac" opacity=".9"/><ellipse cx="40" cy="102" rx="36" ry="12" fill="#a3a6ab" opacity=".9"/><ellipse cx="182" cy="50" rx="12" ry="8" fill="#b9bcc1" opacity=".8"/></g></svg></div><svg class="ab" style="left:26.0px;top:153.3px" width="14.6" height="19.5" viewBox="0 0 14.6 19.5"><path fill="#19c45c" d="M2.26 0H8.98L14.6 5.62V17.24a2.26 2.26 0 0 1-2.26 2.26H2.26a2.26 2.26 0 0 1-2.26-2.26V2.26a2.26 2.26 0 0 1 2.26-2.26z"/><path fill="#fff" fill-opacity=".36" d="M8.98 0L14.6 5.62H10.22a1.24 1.24 0 0 1-1.24-1.24z"/><rect x="4.04" y="9.93" width="6.51" height="4.72" rx="0.67" fill="#fff"/><path fill="#19c45c" d="M4.83 13.86l1.46 -1.91 1.01 1.12 0.67 -0.67 1.80 1.46z"/><circle cx="5.84" cy="11.27" r="0.54" fill="#19c45c"/></svg><div class="ab t nm" style="left:66.500px;top:151px">Mountain.j<i>...</i></div></div>
<div class="card" style="left:547px;top:496px"><div class="th"></div><svg class="ab" style="left:64.7px;top:23.7px" width="65" height="87" viewBox="0 0 65 87"><path fill="#0a5fd3" d="M10.07 0H39.97L65 25.03V76.92a10.07 10.07 0 0 1-10.07 10.07H10.07a10.07 10.07 0 0 1-10.07-10.07V10.07a10.07 10.07 0 0 1 10.07-10.07z"/><path fill="#fff" fill-opacity=".36" d="M39.97 0L65 25.03H45.52a5.54 5.54 0 0 1-5.54-5.54z"/><text x="32.50" y="62.20" text-anchor="middle" font-family="Liberation Sans, sans-serif" font-weight="700" font-size="20.50" fill="#fff" letter-spacing="0.20">DOC</text></svg><svg class="ab" style="left:26.0px;top:153.3px" width="14.6" height="19.5" viewBox="0 0 14.6 19.5"><path fill="#0a5fd3" d="M2.26 0H8.98L14.6 5.62V17.24a2.26 2.26 0 0 1-2.26 2.26H2.26a2.26 2.26 0 0 1-2.26-2.26V2.26a2.26 2.26 0 0 1 2.26-2.26z"/><path fill="#fff" fill-opacity=".36" d="M8.98 0L14.6 5.62H10.22a1.24 1.24 0 0 1-1.24-1.24z"/><text x="7.30" y="13.94" text-anchor="middle" font-family="Liberation Sans, sans-serif" font-weight="700" font-size="4.60" fill="#fff" letter-spacing="0.04">DOC</text></svg><div class="ab t nm" style="left:66.500px;top:151px">Letterhead.<i><i>...</i></i></div></div>
<div class="card" style="left:765px;top:496px"><div class="th"></div><svg class="ab" style="left:64.7px;top:23.7px" width="65" height="87" viewBox="0 0 65 87"><path fill="#e03a06" d="M10.07 0H39.97L65 25.03V76.92a10.07 10.07 0 0 1-10.07 10.07H10.07a10.07 10.07 0 0 1-10.07-10.07V10.07a10.07 10.07 0 0 1 10.07-10.07z"/><path fill="#fff" fill-opacity=".36" d="M39.97 0L65 25.03H45.52a5.54 5.54 0 0 1-5.54-5.54z"/><text x="32.50" y="62.20" text-anchor="middle" font-family="Liberation Sans, sans-serif" font-weight="700" font-size="20.50" fill="#fff" letter-spacing="0.20">PPT</text></svg><svg class="ab" style="left:26.0px;top:153.3px" width="14.6" height="19.5" viewBox="0 0 14.6 19.5"><path fill="#e03a06" d="M2.26 0H8.98L14.6 5.62V17.24a2.26 2.26 0 0 1-2.26 2.26H2.26a2.26 2.26 0 0 1-2.26-2.26V2.26a2.26 2.26 0 0 1 2.26-2.26z"/><path fill="#fff" fill-opacity=".36" d="M8.98 0L14.6 5.62H10.22a1.24 1.24 0 0 1-1.24-1.24z"/><text x="7.30" y="13.94" text-anchor="middle" font-family="Liberation Sans, sans-serif" font-weight="700" font-size="4.60" fill="#fff" letter-spacing="0.04">PPT</text></svg><div class="ab t nm" style="left:66.500px;top:151px">sales_repo<i>...</i></div></div>
<div class="card" style="left:982px;top:496px"><div class="ph"><svg width="193" height="130" viewBox="0 0 192 129" preserveAspectRatio="none" style="display:block"><defs><linearGradient id="g11" x1="0" y1="0" x2="0" y2="1"><stop offset="0" stop-color="#1f86d0"/><stop offset="1" stop-color="#63b2e2"/></linearGradient><linearGradient id="g12" x1="0" y1="0" x2="0" y2="1"><stop offset="0" stop-color="#52acd6"/><stop offset="0.6" stop-color="#a6c9d2"/><stop offset="1" stop-color="#c8c6b4"/></linearGradient><linearGradient id="g13" x1="0" y1="0" x2="0" y2="1"><stop offset="0" stop-color="#c99e6c"/><stop offset="0.5" stop-color="#c08c56"/><stop offset="1" stop-color="#b67a44"/></linearGradient><filter id="f14" x="-20%" y="-20%" width="140%" height="140%"><feGaussianBlur stdDeviation="1.3"/></filter><filter id="f15" x="-20%" y="-20%" width="140%" height="140%"><feGaussianBlur stdDeviation="0.8"/></filter><filter id="f16" x="-20%" y="-20%" width="140%" height="140%"><feGaussianBlur stdDeviation="2.5"/></filter></defs><rect x="0" y="0" width="192" height="129" fill="url(#g13)" /><g filter="url(#f14)"><polygon points="144.5,84.5 196.5,80.5 196.5,134.5 124.5,134.5" fill="#c9955e" opacity=".8"/><polygon points="-5.5,-5.5 100.5,0.0 84.5,5.5 66.5,14.5 64.5,22.5 50.5,27.5 38.5,28.5 24.5,23.5 14.5,23.5 2.5,27.5 -5.5,27.5" fill="url(#g11)" /><polygon points="-5.5,28.0 4.5,26.5 14.5,23.3 24.5,24.0 38.5,29.0 50.5,27.5 64.5,24.5 64.5,36.5 54.5,36.5 34.5,33.0 -5.5,31.5" fill="#34695a" /><polygon points="-5.5,31.0 34.5,32.5 54.5,36.0 64.5,39.5 63.5,50.5 54.5,58.5 42.5,68.5 32.5,64.5 -5.5,53.5" fill="url(#g12)" /><polygon points="36.5,34.5 54.5,37.5 63.5,41.5 62.5,51.5 54.5,58.5 42.5,68.5 36.5,66.5 50.5,50.5 50.5,41.5" fill="#d4cdbd" opacity=".75"/><polygon points="100.5,-5.5 196.5,-5.5 196.5,57.5 174.5,54.5 144.5,50.5 124.5,50.5 94.5,41.5 74.5,36.5 64.5,38.5 64.5,22.5 66.5,14.5 84.5,5.5" fill="#4d4a27" /><polygon points="104.5,1.5 144.5,-0.5 192.0,3.5 192.0,17.5 164.5,14.5 124.5,20.5 94.5,16.5 84.5,10.5" fill="#77793a" opacity=".85"/><polygon points="70.5,24.5 94.5,24.5 134.5,27.5 192.0,32.5 192.0,50.5 144.5,46.5 94.5,38.5 70.5,34.5" fill="#35391f" opacity=".7"/><rect x="88" y="28" width="10" height="9" fill="#4b97c9" opacity=".8"/><rect x="133" y="25" width="9" height="14" fill="#4b97c9" opacity=".7"/><rect x="186" y="24" width="8" height="22" fill="#58a7d4" opacity=".85"/><rect x="112" y="30" width="6" height="8" fill="#4b97c9" opacity=".6"/><polygon points="74,22 78,22 77,36 73,36" fill="#a87c60" /><polygon points="168,8 173,8 168,52 163,52" fill="#9a765a" /><polygon points="114,16 118,18 134,36 130,36" fill="#9a8466" opacity=".8"/><polygon points="124.5,50.5 196.5,56.5 196.5,84.5 174.5,76.5 154.5,64.5 134.5,58.5" fill="#7a5a32" opacity=".85"/><polygon points="128.5,43.5 136.5,41.5 143.5,44.5 142.5,51.5 130.5,52.5" fill="#1d1d12" /><ellipse cx="166" cy="66" rx="10" ry="5" fill="#3a3020" opacity=".7"/></g><g filter="url(#f15)"><polygon points="90.5,41.5 95.5,34.5 102.5,34.5 104.5,41.5 103.5,54.5 102.5,72.5 97.5,73.5 94.5,64.5 92.5,72.5 89.5,72.5 90.5,54.5" fill="#b27144" /><polygon points="93.0,52.5 103.5,51.5 103.5,64.5 94.5,65.5" fill="#dcdad6" /><polygon points="112.5,37.5 115.5,18.5 119.5,17.5 119.5,36.5 126.5,42.5 123.5,46.5 119.5,44.5 118.5,58.5 124.5,70.5 116.5,74.5 104.5,73.5 104.5,68.5 109.5,58.5 108.5,46.5 104.5,44.5 107.5,40.5" fill="#c58e66" /><polygon points="108.5,44.5 119.5,42.5 119.5,49.5 109.0,50.5" fill="#5f6f52" /><polygon points="145.5,46.5 149.5,37.5 154.5,37.5 156.5,44.5 175.5,41.5 176.0,44.5 158.5,50.5 159.5,63.5 170.5,67.5 159.5,79.5 154.5,77.5 150.5,84.5 144.5,98.5 141.5,97.5 148.5,74.5 146.5,64.5" fill="#c2824e" /><polygon points="146.0,64.5 159.5,62.5 162.5,70.5 148.5,74.5" fill="#1c3048" /><ellipse cx="152.5" cy="39" rx="3.5" ry="4" fill="#5a3a26" /><ellipse cx="101" cy="35.5" rx="3.5" ry="3.5" fill="#4a3020" /><ellipse cx="119" cy="39" rx="4" ry="3.5" fill="#3a2a20" /><polygon points="99.5,79.5 104.5,78.5 114.5,88.5 106.5,91.5 98.5,87.5" fill="#19140e" /><polygon points="123.5,87.5 134.5,88.5 144.5,98.5 138.5,103.5 126.5,95.5" fill="#19140e" /><polygon points="176.5,73.5 190.5,72.5 190.5,78.5 177.5,78.5" fill="#b23a3a" /><ellipse cx="186" cy="71" rx="3" ry="4" fill="#2b62a8" /><polygon points="-5.5,57.5 14.5,62.5 32.5,66.5 46.5,76.5 64.5,74.5 70.5,84.5 74.5,104.5 72.5,134.5 34.5,134.5 38.5,104.5 42.5,90.5 24.5,89.5 -5.5,84.5" fill="#ae5f2a" /><polygon points="7.5,64.5 32.5,69.5 38.5,77.5 34.5,84.5 10.5,81.5" fill="#d28850" opacity=".8"/><polygon points="46.5,90.5 62.5,82.5 66.5,134.5 41.5,134.5" fill="#cf8a56" opacity=".7"/><polygon points="-5.5,55.5 5.5,58.5 7.0,80.5 -5.5,85.0" fill="#3a2118" /><ellipse cx="78" cy="63" rx="13.5" ry="18.5" fill="#b06a38" /><polygon points="63.5,52.5 66.0,41.5 76.5,37.5 87.5,39.5 92.0,46.5 89.5,56.5 82.5,48.5 70.5,48.5 65.0,56.5" fill="#291810" /><polygon points="66.0,66.5 70.5,74.5 78.5,79.5 84.5,75.5 87.0,67.5 88.5,80.5 82.5,87.0 74.5,85.0 68.0,78.5" fill="#2a1a12" /><ellipse cx="77.5" cy="56.5" rx="6.3" ry="5" fill="#d07a30" /><ellipse cx="77.5" cy="56.5" rx="5.3" ry="4.2" fill="#2a7cc8" /><ellipse cx="88.5" cy="60.5" rx="4.3" ry="3.8" fill="#2266b0" /><polygon points="74.5,77.5 84.5,74.5 98.5,75.5 94.5,79.0 82.5,85.0 75.5,83.0" fill="#15120e" /><polygon points="73.5,94.5 81.0,90.0 77.0,103.0" fill="#1a1410" /><polygon points="73.5,123.5 83.5,118.5 83.5,134.5 73.0,134.5" fill="#1a1410" /></g></svg></div><svg class="ab" style="left:26.0px;top:153.3px" width="14.6" height="19.5" viewBox="0 0 14.6 19.5"><path fill="#19c45c" d="M2.26 0H8.98L14.6 5.62V17.24a2.26 2.26 0 0 1-2.26 2.26H2.26a2.26 2.26 0 0 1-2.26-2.26V2.26a2.26 2.26 0 0 1 2.26-2.26z"/><path fill="#fff" fill-opacity=".36" d="M8.98 0L14.6 5.62H10.22a1.24 1.24 0 0 1-1.24-1.24z"/><rect x="4.04" y="9.93" width="6.51" height="4.72" rx="0.67" fill="#fff"/><path fill="#19c45c" d="M4.83 13.86l1.46 -1.91 1.01 1.12 0.67 -0.67 1.80 1.46z"/><circle cx="5.84" cy="11.27" r="0.54" fill="#19c45c"/></svg><div class="ab t nm" style="left:66.500px;top:151px">Beach.jpeg</div></div>
<div class="card" style="left:1199px;top:496px"><div class="th"></div><svg class="ab" style="left:64.5px;top:22.1px" width="67" height="89" viewBox="0 0 67 89"><path fill="#fdb024" d="M10.38 0H41.20L67 25.80V78.61a10.38 10.38 0 0 1-10.38 10.38H10.38a10.38 10.38 0 0 1-10.38-10.38V10.38a10.38 10.38 0 0 1 10.38-10.38z"/><path fill="#fff" fill-opacity=".36" d="M41.20 0L67 25.80H46.92a5.71 5.71 0 0 1-5.71-5.71z"/><rect x="14.71" y="7.57" width="9.28" height="3.71" fill="#fff"/><rect x="20.90" y="14.24" width="9.28" height="3.71" fill="#fff"/><rect x="14.71" y="20.91" width="9.28" height="3.71" fill="#fff"/><rect x="20.90" y="27.59" width="9.28" height="3.71" fill="#fff"/><rect x="14.71" y="34.27" width="9.28" height="3.71" fill="#fff"/><rect x="20.59" y="7.57" width="3.71" height="32.04" fill="#fff"/><rect x="18.12" y="41.83" width="8.66" height="16.02" rx="4.33" fill="#fff"/><circle cx="22.45" cy="52.95" r="2.16" fill="#fdb024"/></svg><svg class="ab" style="left:26.0px;top:153.3px" width="14.6" height="19.5" viewBox="0 0 14.6 19.5"><path fill="#fdb024" d="M2.26 0H8.98L14.6 5.62V17.24a2.26 2.26 0 0 1-2.26 2.26H2.26a2.26 2.26 0 0 1-2.26-2.26V2.26a2.26 2.26 0 0 1 2.26-2.26z"/><path fill="#fff" fill-opacity=".36" d="M8.98 0L14.6 5.62H10.22a1.24 1.24 0 0 1-1.24-1.24z"/><rect x="3.21" y="1.66" width="2.02" height="0.81" fill="#fff"/><rect x="4.55" y="3.12" width="2.02" height="0.81" fill="#fff"/><rect x="3.21" y="4.58" width="2.02" height="0.81" fill="#fff"/><rect x="4.55" y="6.04" width="2.02" height="0.81" fill="#fff"/><rect x="3.21" y="7.51" width="2.02" height="0.81" fill="#fff"/><rect x="4.49" y="1.66" width="0.81" height="7.02" fill="#fff"/><rect x="3.95" y="9.16" width="1.89" height="3.51" rx="0.94" fill="#fff"/><circle cx="4.89" cy="11.60" r="0.47" fill="#fdb024"/></svg><div class="ab t nm" style="left:66.500px;top:151px">Airborne-II.<i><i>...</i></i></div></div>
<div class="card" style="left:1416px;top:496px"><div class="ph"><svg width="193" height="130" viewBox="0 0 192 129" preserveAspectRatio="none" style="display:block"><defs><linearGradient id="g17" x1="0" y1="0" x2="0" y2="1"><stop offset="0" stop-color="#82b2bb"/><stop offset="0.45" stop-color="#a9c9ce"/><stop offset="0.8" stop-color="#dfe3e1"/><stop offset="1" stop-color="#e6e4de"/></linearGradient><linearGradient id="g18" x1="0" y1="0" x2="0" y2="1"><stop offset="0" stop-color="#3b9d95"/><stop offset="1" stop-color="#1f7a78"/></linearGradient><filter id="f19" x="-20%" y="-20%" width="140%" height="140%"><feGaussianBlur stdDeviation="0.5"/></filter><filter id="f20" x="-20%" y="-20%" width="140%" height="140%"><feGaussianBlur stdDeviation="1.6"/></filter></defs><rect x="0" y="0" width="192" height="108" fill="url(#g17)" /><rect x="0" y="106" width="192" height="23" fill="url(#g18)" /><g filter="url(#f19)"><polygon points="0,103 150,103 150,110 80,114 0,119" fill="#c9c5b3" /><polygon points="0,103 150,103 150,105.500 0,105.500" fill="#e4e1d4" /><g stroke="#3c4444" stroke-width="2.400" fill="none"><path d="M56 100L70 65H104"/><path d="M76 66V92"/><path d="M104 65V102"/></g><polygon points="66,64 106,63 106,67 72,68" fill="#55605e" /><polygon points="60,90 84,86 92,96 66,102 54,102" fill="#ecebe6" /><polygon points="50,98 60,95 62,101 52,102" fill="#262a2a" /><polygon points="104,54 110,54 106,66 102,66" fill="#dfe4e4" /><polygon points="148,88 152,84 166,84 168,104 150,108 144,102" fill="#17191b" /><polygon points="120,60 124,58 127,62 130,72 130,78 128,102 125,102 124,88 122,102 119,102 118,78 118,70" fill="#a27250" /><polygon points="106,70 118,66 119,70 108,73" fill="#a27250" /><rect x="118" y="78" width="10" height="9" fill="#26282a" /><polygon points="94,8 100,6 104,12 106,26 107,34 102,38 96,40 92,44 90,50 88,50 90,42 96,30 96,20" fill="#8c5a3a" /><polygon points="74,6 78,6 84,16 96,16 96,20 82,20" fill="#9a6644" /><polygon points="104,12 112,6 116,2 118,4 108,16" fill="#9a6644" /><polygon points="94,30 107,28 107,36 96,42" fill="#5a4030" /></g><g filter="url(#f20)"><polygon points="0,120 30,116 60,118 100,112 130,108 150,104 170,100 192,98 192,129 0,129" fill="#2a8f88" /><ellipse cx="40" cy="122" rx="30" ry="3" fill="#63bcb2" opacity=".8"/><ellipse cx="120" cy="116" rx="30" ry="3" fill="#6cc2b8" opacity=".8"/><ellipse cx="170" cy="108" rx="20" ry="3" fill="#7ccabf" opacity=".8"/><ellipse cx="90" cy="127" rx="40" ry="3" fill="#17696a" opacity=".8"/><ellipse cx="160" cy="122" rx="30" ry="3" fill="#1a7070" opacity=".8"/></g></svg></div><svg class="ab" style="left:26.0px;top:153.3px" width="14.6" height="19.5" viewBox="0 0 14.6 19.5"><path fill="#19c45c" d="M2.26 0H8.98L14.6 5.62V17.24a2.26 2.26 0 0 1-2.26 2.26H2.26a2.26 2.26 0 0 1-2.26-2.26V2.26a2.26 2.26 0 0 1 2.26-2.26z"/><path fill="#fff" fill-opacity=".36" d="M8.98 0L14.6 5.62H10.22a1.24 1.24 0 0 1-1.24-1.24z"/><rect x="4.04" y="9.93" width="6.51" height="4.72" rx="0.67" fill="#fff"/><path fill="#19c45c" d="M4.83 13.86l1.46 -1.91 1.01 1.12 0.67 -0.67 1.80 1.46z"/><circle cx="5.84" cy="11.27" r="0.54" fill="#19c45c"/></svg><div class="ab t nm" style="left:66.500px;top:151px">Vacation.jp<i>...</i></div></div>
<div class="card" style="left:330px;top:713px"><div class="th"></div><svg class="ab" style="left:64.5px;top:22.1px" width="67" height="89" viewBox="0 0 67 89"><path fill="#271d3b" d="M10.38 0H41.20L67 25.80V78.61a10.38 10.38 0 0 1-10.38 10.38H10.38a10.38 10.38 0 0 1-10.38-10.38V10.38a10.38 10.38 0 0 1 10.38-10.38z"/><path fill="#fff" fill-opacity=".36" d="M41.20 0L67 25.80H46.92a5.71 5.71 0 0 1-5.71-5.71z"/><rect x="20.10" y="43.61" width="14.74" height="4.33" rx="2.16" fill="#fff"/><rect x="20.10" y="52.06" width="26.80" height="4.33" rx="2.16" fill="#fff"/><rect x="20.10" y="60.08" width="26.80" height="4.33" rx="2.16" fill="#fff"/><rect x="20.10" y="68.09" width="26.80" height="4.33" rx="2.16" fill="#fff"/></svg><svg class="ab" style="left:26.0px;top:153.3px" width="14.6" height="19.5" viewBox="0 0 14.6 19.5"><path fill="#271d3b" d="M2.26 0H8.98L14.6 5.62V17.24a2.26 2.26 0 0 1-2.26 2.26H2.26a2.26 2.26 0 0 1-2.26-2.26V2.26a2.26 2.26 0 0 1 2.26-2.26z"/><path fill="#fff" fill-opacity=".36" d="M8.98 0L14.6 5.62H10.22a1.24 1.24 0 0 1-1.24-1.24z"/><rect x="4.38" y="9.55" width="3.21" height="0.94" rx="0.47" fill="#fff"/><rect x="4.38" y="11.41" width="5.84" height="0.94" rx="0.47" fill="#fff"/><rect x="4.38" y="13.16" width="5.84" height="0.94" rx="0.47" fill="#fff"/><rect x="4.38" y="14.92" width="5.84" height="0.94" rx="0.47" fill="#fff"/></svg><div class="ab t nm" style="left:66.500px;top:151px">1.txt</div></div>
<div class="card" style="left:547px;top:713px"><div class="th"></div><svg class="ab" style="left:64.7px;top:23.7px" width="65" height="87" viewBox="0 0 65 87"><path fill="#e03a06" d="M10.07 0H39.97L65 25.03V76.92a10.07 10.07 0 0 1-10.07 10.07H10.07a10.07 10.07 0 0 1-10.07-10.07V10.07a10.07 10.07 0 0 1 10.07-10.07z"/><path fill="#fff" fill-opacity=".36" d="M39.97 0L65 25.03H45.52a5.54 5.54 0 0 1-5.54-5.54z"/><text x="32.50" y="62.20" text-anchor="middle" font-family="Liberation Sans, sans-serif" font-weight="700" font-size="20.50" fill="#fff" letter-spacing="0.20">PPT</text></svg><svg class="ab" style="left:26.0px;top:153.3px" width="14.6" height="19.5" viewBox="0 0 14.6 19.5"><path fill="#e03a06" d="M2.26 0H8.98L14.6 5.62V17.24a2.26 2.26 0 0 1-2.26 2.26H2.26a2.26 2.26 0 0 1-2.26-2.26V2.26a2.26 2.26 0 0 1 2.26-2.26z"/><path fill="#fff" fill-opacity=".36" d="M8.98 0L14.6 5.62H10.22a1.24 1.24 0 0 1-1.24-1.24z"/><text x="7.30" y="13.94" text-anchor="middle" font-family="Liberation Sans, sans-serif" font-weight="700" font-size="4.60" fill="#fff" letter-spacing="0.04">PPT</text></svg><div class="ab t nm" style="left:66.500px;top:151px">harvard.pptx</div></div>
<div class="card" style="left:765px;top:713px"><div class="ph"><svg width="193" height="130" viewBox="0 0 192 129" preserveAspectRatio="none" style="display:block"><defs><linearGradient id="g21" x1="0" y1="0" x2="1" y2="0"><stop offset="0" stop-color="#8a8078"/><stop offset="0.45" stop-color="#a1958c"/><stop offset="1" stop-color="#93877e"/></linearGradient><filter id="f22" x="-20%" y="-20%" width="140%" height="140%"><feGaussianBlur stdDeviation="0.8"/></filter><filter id="f23" x="-20%" y="-20%" width="140%" height="140%"><feGaussianBlur stdDeviation="3"/></filter></defs><rect x="0" y="0" width="192" height="129" fill="url(#g21)" /><g filter="url(#f22)"><polygon points="108,0 192,0 192,129 150,129 140,70 128,52 116,30" fill="#2a2b27" /><polygon points="124,4 134,2 140,30 136,52 128,40" fill="#85705a" /><polygon points="162,0 178,0 182,40 176,70 168,50" fill="#77674f" /><polygon points="112,52 134,54 140,66 118,62" fill="#1e201d" /><polygon points="0,0 16,0 40,14 47,29 30,20 12,11 0,9" fill="#26281f" /><polygon points="58,30 66,26 70,60 58,90 48,100 52,70" fill="#6a5f58" opacity=".8"/><ellipse cx="80" cy="33" rx="15" ry="17" fill="#a8735b" /><polygon points="60,30 66,22 70,34 70,52 62,50" fill="#5b5350" /><polygon points="68,18 80,16 92,22 88,28 72,30" fill="#b58068" /><ellipse cx="88" cy="48" rx="13" ry="9" fill="#d9d5d1" /><polygon points="74,36 84,32 92,28 93,30 84,35 76,39" fill="#2a2624" /><polygon points="66,62 78,56 100,54 116,58 138,66 156,72 150,84 136,84 134,100 128,129 58,129 52,100 56,78" fill="#a3c7dc" /><polygon points="56,80 70,76 80,110 76,129 58,129 52,100" fill="#8db4cc" /><polygon points="98,60 104,64 116,86 112,88 100,70" fill="#23282c" /><polygon points="78,56 96,56 100,70 88,66" fill="#a07058" /><polygon points="136,70 150,66 158,74 152,86 140,88 134,80" fill="#b58a78" /><ellipse cx="140" cy="84" rx="5" ry="4" fill="#9e2a2a" /><polygon points="138,90 152,86 160,70 176,68 186,84 192,110 192,129 128,129 134,100" fill="#231f1e" /><polygon points="100,129 110,122 130,124 140,129" fill="#d6d0ca" /></g><g filter="url(#f23)"><ellipse cx="10" cy="92" rx="16" ry="30" fill="#6d6b57" /><ellipse cx="48" cy="112" rx="16" ry="11" fill="#cfd0c8" /><ellipse cx="20" cy="124" rx="24" ry="8" fill="#5a5846" /></g></svg></div><svg class="ab" style="left:26.0px;top:153.3px" width="14.6" height="19.5" viewBox="0 0 14.6 19.5"><path fill="#19c45c" d="M2.26 0H8.98L14.6 5.62V17.24a2.26 2.26 0 0 1-2.26 2.26H2.26a2.26 2.26 0 0 1-2.26-2.26V2.26a2.26 2.26 0 0 1 2.26-2.26z"/><path fill="#fff" fill-opacity=".36" d="M8.98 0L14.6 5.62H10.22a1.24 1.24 0 0 1-1.24-1.24z"/><rect x="4.04" y="9.93" width="6.51" height="4.72" rx="0.67" fill="#fff"/><path fill="#19c45c" d="M4.83 13.86l1.46 -1.91 1.01 1.12 0.67 -0.67 1.80 1.46z"/><circle cx="5.84" cy="11.27" r="0.54" fill="#19c45c"/></svg><div class="ab t nm" style="left:66.500px;top:151px">portrait.jpeg</div></div>
<div class="card" style="left:982px;top:713px"><div class="th"></div><svg class="ab" style="left:64.7px;top:23.7px" width="65" height="87" viewBox="0 0 65 87"><path fill="#0d7a3b" d="M10.07 0H39.97L65 25.03V76.92a10.07 10.07 0 0 1-10.07 10.07H10.07a10.07 10.07 0 0 1-10.07-10.07V10.07a10.07 10.07 0 0 1 10.07-10.07z"/><path fill="#fff" fill-opacity=".36" d="M39.97 0L65 25.03H45.52a5.54 5.54 0 0 1-5.54-5.54z"/><text x="32.50" y="62.20" text-anchor="middle" font-family="Liberation Sans, sans-serif" font-weight="700" font-size="20.50" fill="#fff" letter-spacing="0.20">XLS</text></svg><svg class="ab" style="left:26.0px;top:153.3px" width="14.6" height="19.5" viewBox="0 0 14.6 19.5"><path fill="#0d7a3b" d="M2.26 0H8.98L14.6 5.62V17.24a2.26 2.26 0 0 1-2.26 2.26H2.26a2.26 2.26 0 0 1-2.26-2.26V2.26a2.26 2.26 0 0 1 2.26-2.26z"/><path fill="#fff" fill-opacity=".36" d="M8.98 0L14.6 5.62H10.22a1.24 1.24 0 0 1-1.24-1.24z"/><text x="7.30" y="13.94" text-anchor="middle" font-family="Liberation Sans, sans-serif" font-weight="700" font-size="4.60" fill="#fff" letter-spacing="0.04">XLS</text></svg><div class="ab t nm" style="left:66.500px;top:151px">spreadshe<i>...</i></div></div>
<div class="card" style="left:1199px;top:713px"><div class="ph"><svg width="193" height="130" viewBox="0 0 192 129" preserveAspectRatio="none" style="display:block"><defs><filter id="f24" x="-20%" y="-20%" width="140%" height="140%"><feGaussianBlur stdDeviation="0.8"/></filter><filter id="f25" x="-20%" y="-20%" width="140%" height="140%"><feGaussianBlur stdDeviation="1.6"/></filter></defs><rect x="0" y="0" width="192" height="129" fill="#c5c9cc" /><g filter="url(#f24)"><polygon points="2,4 7,4 13,129 7,129" fill="#c9a365" /><rect x="0" y="28" width="15" height="4" fill="#c9a365" /><rect x="0" y="55" width="17" height="4" fill="#c9a365" /><rect x="0" y="82" width="19" height="4" fill="#c9a365" /><rect x="0" y="109" width="20" height="4" fill="#c9a365" /><polygon points="140,109 186,109 186,115 164,116 164,129 150,129 150,116 140,115" fill="#b5a597" /><rect x="152" y="84" width="20" height="16" fill="#3b3531" /><rect x="144" y="98" width="22" height="11" fill="#2a2725" /><ellipse cx="174" cy="104" rx="11" ry="7" fill="#b9995a" /><polygon points="44,50 54,40 70,32 84,38 92,50 100,70 120,70 128,78 124,129 52,129 44,100 41,80" fill="#d6d6da" /><polygon points="84,38 92,34 100,40 100,56 94,52" fill="#a5714d" /><polygon points="43,84 66,84 72,98 90,72 98,78 88,104 80,122 62,126 54,118 48,104" fill="#a26a43" /><polygon points="43,84 62,84 60,100 54,112 48,104" fill="#4c3c30" /><polygon points="82,126 116,120 118,124 84,129" fill="#8a5a30" /><polygon points="52,124 116,124 118,129 52,129" fill="#b8b8b4" /><polygon points="124,70 142,62 142,90 140,112 132,126 120,122 120,96" fill="#a66d46" /><polygon points="92,44 104,38 112,42 112,62 104,74 94,72 90,60" fill="#b27750" /><polygon points="112,56 140,50 142,64 132,72 118,70" fill="#b27750" /><polygon points="84,68 90,64 104,72 102,78" fill="#1d2320" /><polygon points="112,40 138,40 136,56 116,56" fill="#e6e6e4" /><ellipse cx="116" cy="58" rx="4" ry="2.5" fill="#1d7a63" /><ellipse cx="128" cy="51" rx="3" ry="2" fill="#1d7a63" /></g><g filter="url(#f25)"><polygon points="48,0 152,0 150,14 144,26 136,28 128,14 120,0 96,0 88,14 86,30 76,32 64,26 54,16" fill="#3a261f" /></g><g filter="url(#f24)"><polygon points="90,0 126,0 128,14 124,28 114,36 102,34 92,24" fill="#aa6f4a" /><polygon points="103,20 120,20 116,25 106,25" fill="#efe6e0" /><polygon points="64,6 92,0 90,24 80,32 66,24" fill="#3a261f" /></g></svg></div><svg class="ab" style="left:26.0px;top:153.3px" width="14.6" height="19.5" viewBox="0 0 14.6 19.5"><path fill="#19c45c" d="M2.26 0H8.98L14.6 5.62V17.24a2.26 2.26 0 0 1-2.26 2.26H2.26a2.26 2.26 0 0 1-2.26-2.26V2.26a2.26 2.26 0 0 1 2.26-2.26z"/><path fill="#fff" fill-opacity=".36" d="M8.98 0L14.6 5.62H10.22a1.24 1.24 0 0 1-1.24-1.24z"/><rect x="4.04" y="9.93" width="6.51" height="4.72" rx="0.67" fill="#fff"/><path fill="#19c45c" d="M4.83 13.86l1.46 -1.91 1.01 1.12 0.67 -0.67 1.80 1.46z"/><circle cx="5.84" cy="11.27" r="0.54" fill="#19c45c"/></svg><div class="ab t nm" style="left:66.500px;top:151px">Coffee.jpeg</div></div>
<div class="card" style="left:1416px;top:713px"><div class="th"></div><svg class="ab" style="left:64.7px;top:23.7px" width="65" height="87" viewBox="0 0 65 87"><path fill="#0a5fd3" d="M10.07 0H39.97L65 25.03V76.92a10.07 10.07 0 0 1-10.07 10.07H10.07a10.07 10.07 0 0 1-10.07-10.07V10.07a10.07 10.07 0 0 1 10.07-10.07z"/><path fill="#fff" fill-opacity=".36" d="M39.97 0L65 25.03H45.52a5.54 5.54 0 0 1-5.54-5.54z"/><text x="32.50" y="62.20" text-anchor="middle" font-family="Liberation Sans, sans-serif" font-weight="700" font-size="20.50" fill="#fff" letter-spacing="0.20">DOC</text></svg><svg class="ab" style="left:26.0px;top:153.3px" width="14.6" height="19.5" viewBox="0 0 14.6 19.5"><path fill="#0a5fd3" d="M2.26 0H8.98L14.6 5.62V17.24a2.26 2.26 0 0 1-2.26 2.26H2.26a2.26 2.26 0 0 1-2.26-2.26V2.26a2.26 2.26 0 0 1 2.26-2.26z"/><path fill="#fff" fill-opacity=".36" d="M8.98 0L14.6 5.62H10.22a1.24 1.24 0 0 1-1.24-1.24z"/><text x="7.30" y="13.94" text-anchor="middle" font-family="Liberation Sans, sans-serif" font-weight="700" font-size="4.60" fill="#fff" letter-spacing="0.04">DOC</text></svg><div class="ab t nm" style="left:66.500px;top:151px">resume.doc</div></div>
<div class="card sel" style="left:330px;top:930px"><div class="ph"><svg width="193" height="130" viewBox="0 0 192 129" preserveAspectRatio="none" style="display:block"><defs><linearGradient id="g26" x1="0" y1="0" x2="1" y2="0"><stop offset="0" stop-color="#e4dad1"/><stop offset="0.3" stop-color="#ece5de"/><stop offset="0.6" stop-color="#eee8e2"/><stop offset="0.72" stop-color="#f3efeb"/><stop offset="1" stop-color="#f5f2ef"/></linearGradient><linearGradient id="g27" x1="0" y1="0" x2="0" y2="1"><stop offset="0" stop-color="#a8a39e"/><stop offset="0.5" stop-color="#9c9792"/><stop offset="1" stop-color="#8f8a85"/></linearGradient><filter id="f28" x="-20%" y="-20%" width="140%" height="140%"><feGaussianBlur stdDeviation="0.8"/></filter><filter id="f29" x="-20%" y="-20%" width="140%" height="140%"><feGaussianBlur stdDeviation="2.5"/></filter><filter id="f30" x="-20%" y="-20%" width="140%" height="140%"><feGaussianBlur stdDeviation="1.4"/></filter></defs><rect x="0" y="-6" width="192" height="142" fill="url(#g26)" /><g filter="url(#f29)"><polygon points="0,34 60,38 52,108 0,112" fill="#f0ebe6" opacity=".8"/><polygon points="0,60 40,50 40,70 0,84" fill="#d9cfc6" opacity=".6"/><rect x="122" y="6" width="18" height="98" fill="#f6f3f0" /></g><g filter="url(#f28)"><rect x="155" y="12" width="42" height="86" fill="#fdfdfd" /><rect x="147" y="10" width="9" height="90" fill="#d4cfcb" /><rect x="138.3" y="8" width="8.4" height="89" fill="#4a4644" /><rect x="141.5" y="10" width="1.5" height="85" fill="#6a6664" /><polygon points="122,-6 192,-6 192,8 150,8 122,6" fill="#ddd2ca" /><polygon points="23,-4 97,-1 97,3.500 23,1" fill="#cfa468" /><polygon points="81,3 91,3.500 86,13 83,13" fill="#2b2927" /><polygon points="16,-6 24,-6 21,19 17,19" fill="#2b2927" /><polygon points="17,27 66,29.500 66,33 17,31" fill="#d4a66a" /><polygon points="17,31 24,32 20,52 17,52" fill="#2b2927" /><polygon points="0,22 6,23.500 6,27 0,26" fill="#2b2927" /><ellipse cx="35" cy="11" rx="8" ry="6" fill="#3d5c2c" /><ellipse cx="42" cy="9" rx="4" ry="4" fill="#4a6c34" /><rect x="27" y="16" width="5" height="12" fill="#3a3a30" /><rect x="32" y="17" width="13" height="11" fill="#c08a55" /><ellipse cx="56" cy="19" rx="8" ry="3.5" fill="#41602f" /><rect x="56" y="22" width="9" height="8" fill="#e9e4df" /><ellipse cx="37" cy="92" rx="2.5" ry="5" fill="#4b6a38" /><ellipse cx="10" cy="95" rx="9" ry="2.5" fill="#f3efea" opacity=".8"/><polygon points="0,114 43,111 46,136 0,136" fill="#c6a071" /><polygon points="23,123 44,120.500 46,136 24,136" fill="#2a3242" /></g><g filter="url(#f30)"><polygon points="70,36 74,22 82,13 92,10 102,12 109,20 109,32 104,44 80,50 74,60 68,58 62,52 64,44" fill="#3a271e" /><ellipse cx="67" cy="48" rx="7" ry="9" fill="#3a271e" /><ellipse cx="105" cy="56" rx="3" ry="6" fill="#4a342a" /><polygon points="78,34 88,26 100,24 108,30 110,44 107,56 100,64 90,66 82,58 78,46" fill="#e0b29a" /><polygon points="78,36 84,30 82,58 78,46" fill="#c4947c" opacity=".8"/><polygon points="74,24 90,14 104,18 109,30 100,27 88,30 80,40 76,50 72,40" fill="#3a271e" /><polygon points="62,68 76,60 100,62 102,68 96,84 86,94 76,80" fill="#e2b8a1" /><polygon points="76,62 92,64 88,72 80,70" fill="#c99f88" opacity=".7"/><polygon points="94,56 101,55 98,58.500" fill="#b06a66" /><polygon points="88,42 95,41 95,42.500 88,43.500" fill="#5a3a30" /><polygon points="101,41 107,41 107,42.500 101,42.500" fill="#5a3a30" /><polygon points="41,80 48,68 58,64 68,66 86,94 99,66 112,70 120,84 126,100 118,112 116,136 46,136 42,110" fill="url(#g27)" /><polygon points="58,64 68,66 86,94 99,66 95,66 86,87 71,65" fill="#b6b1ad" /><polygon points="41,82 53,70 61,100 66,136 46,136 42,110" fill="#8a8580" /><polygon points="66,104 98,96 110,136 70,136" fill="#aaa5a0" opacity=".6"/><polygon points="112,72 120,84 126,100 118,112 114,96" fill="#87827d" /></g><g filter="url(#f28)"><polygon points="118,101 192,94 192,136 114,136" fill="#dcd8d6" /><polygon points="118,101 192,94 192,97.500 118,104.500" fill="#edeae8" /><ellipse cx="160" cy="132" rx="3" ry="3.5" fill="#b9a89e" /></g></svg></div><svg class="ab" style="left:26.0px;top:153.3px" width="14.6" height="19.5" viewBox="0 0 14.6 19.5"><path fill="#19c45c" d="M2.26 0H8.98L14.6 5.62V17.24a2.26 2.26 0 0 1-2.26 2.26H2.26a2.26 2.26 0 0 1-2.26-2.26V2.26a2.26 2.26 0 0 1 2.26-2.26z"/><path fill="#fff" fill-opacity=".36" d="M8.98 0L14.6 5.62H10.22a1.24 1.24 0 0 1-1.24-1.24z"/><rect x="4.04" y="9.93" width="6.51" height="4.72" rx="0.67" fill="#fff"/><path fill="#19c45c" d="M4.83 13.86l1.46 -1.91 1.01 1.12 0.67 -0.67 1.80 1.46z"/><circle cx="5.84" cy="11.27" r="0.54" fill="#19c45c"/></svg><div class="ab t nm" style="left:66.500px;top:151px">work.jpeg</div></div>
<div class="card" style="left:547px;top:930px"><div class="ph"><svg width="193" height="130" viewBox="0 0 192 129" preserveAspectRatio="none" style="display:block"><defs><radialGradient id="g31" cx="0.45" cy="0.45" r="0.75"><stop offset="0" stop-color="#b96a34"/><stop offset="0.6" stop-color="#b1602a"/><stop offset="1" stop-color="#9c4c1a"/></radialGradient><filter id="f32" x="-20%" y="-20%" width="140%" height="140%"><feGaussianBlur stdDeviation="0.8"/></filter></defs><rect x="0" y="0" width="192" height="129" fill="url(#g31)" /><g filter="url(#f32)"><polygon points="62,106 76,92 92,82 100,98 122,86 134,92 140,104 138,129 58,129" fill="#c7a574" /><polygon points="86,92 94,86 100,98 92,106" fill="#8e3d32" /><ellipse cx="108" cy="78" rx="15" ry="18" fill="#4a2b1b" /><polygon points="92,64 96,50 106,44 118,44 128,54 128,68 118,63 102,62" fill="#b7a78f" /><ellipse cx="112" cy="84" rx="7" ry="6" fill="#6a4028" opacity=".7"/><ellipse cx="72" cy="116" rx="24" ry="13" fill="#191513" /><ellipse cx="94" cy="110" rx="11" ry="9" fill="#e3dfdb" /><ellipse cx="109" cy="111" rx="12" ry="13" fill="#15110f" /><polygon points="108,100 112,88 116,100" fill="#15110f" /><polygon points="88,106 92,104 100,124 96,126" fill="#a23a3a" /><ellipse cx="84" cy="121" rx="10" ry="8" fill="#4a2b1b" /><polygon points="46,124 60,118 70,129 46,129" fill="#4a2b1b" /></g></svg></div><svg class="ab" style="left:26.0px;top:153.3px" width="14.6" height="19.5" viewBox="0 0 14.6 19.5"><path fill="#19c45c" d="M2.26 0H8.98L14.6 5.62V17.24a2.26 2.26 0 0 1-2.26 2.26H2.26a2.26 2.26 0 0 1-2.26-2.26V2.26a2.26 2.26 0 0 1 2.26-2.26z"/><path fill="#fff" fill-opacity=".36" d="M8.98 0L14.6 5.62H10.22a1.24 1.24 0 0 1-1.24-1.24z"/><rect x="4.04" y="9.93" width="6.51" height="4.72" rx="0.67" fill="#fff"/><path fill="#19c45c" d="M4.83 13.86l1.46 -1.91 1.01 1.12 0.67 -0.67 1.80 1.46z"/><circle cx="5.84" cy="11.27" r="0.54" fill="#19c45c"/></svg><div class="ab t nm" style="left:66.500px;top:151px">puppy.jpeg</div></div>
<div class="card" style="left:765px;top:930px"><div class="th"></div><svg class="ab" style="left:69.0px;top:23.7px;overflow:visible" width="65" height="87" viewBox="0 0 65 87"><path fill="#e3e3e3" d="M10.00 0H40.00L65 25.00V77.00a10.00 10.00 0 0 1-10.00 10.00H10.00a10.00 10.00 0 0 1-10.00-10.00V10.00a10.00 10.00 0 0 1 10.00-10.00z"/><path fill="#cfcfcf" d="M40.00 0L65 25.00H46.00a6.00 6.00 0 0 1-6.00-6.00z"/><rect x="-13.00" y="39.00" width="66.00" height="33.00" rx="3.00" fill="#d90e0e"/><text x="20.00" y="63.30" text-anchor="middle" font-family="Liberation Sans, sans-serif" font-weight="700" font-size="22.00" fill="#fff" letter-spacing="0.30">PDF</text></svg><svg class="ab" style="left:26.0px;top:153.3px;overflow:visible" width="14.6" height="19.5" viewBox="0 0 14.6 19.5"><path fill="#e3e3e3" d="M2.25 0H8.98L14.6 5.62V17.25a2.25 2.25 0 0 1-2.25 2.25H2.25a2.25 2.25 0 0 1-2.25-2.25V2.25a2.25 2.25 0 0 1 2.25-2.25z"/><path fill="#cfcfcf" d="M8.98 0L14.6 5.62H10.33a1.35 1.35 0 0 1-1.35-1.35z"/><rect x="-2.92" y="8.76" width="14.82" height="7.41" rx="0.67" fill="#d90e0e"/><text x="4.49" y="14.22" text-anchor="middle" font-family="Liberation Sans, sans-serif" font-weight="700" font-size="4.94" fill="#fff" letter-spacing="0.07">PDF</text></svg><div class="ab t nm" style="left:66.500px;top:151px">Binder1.pdf</div></div>
<div class="card" style="left:982px;top:930px"><div class="th"></div><svg class="ab" style="left:64.5px;top:22.1px" width="67" height="89" viewBox="0 0 67 89"><path fill="#f40500" d="M10.38 0H41.20L67 25.80V78.61a10.38 10.38 0 0 1-10.38 10.38H10.38a10.38 10.38 0 0 1-10.38-10.38V10.38a10.38 10.38 0 0 1 10.38-10.38z"/><path fill="#fff" fill-opacity=".36" d="M41.20 0L67 25.80H46.92a5.71 5.71 0 0 1-5.71-5.71z"/><svg x="11.85" y="33.53" width="43.29" height="43.29" viewBox="0 0 24 24"><path fill="#fff" d="M17 10.5V7c0-.55-.45-1-1-1H4c-.55 0-1 .45-1 1v10c0 .55.45 1 1 1h12c.55 0 1-.45 1-1v-3.5l4 4v-11l-4 4z"/><circle cx="10" cy="12" r="2.6" fill="#f40500"/></svg></svg><svg class="ab" style="left:26.0px;top:153.3px" width="14.6" height="19.5" viewBox="0 0 14.6 19.5"><path fill="#f40500" d="M2.26 0H8.98L14.6 5.62V17.24a2.26 2.26 0 0 1-2.26 2.26H2.26a2.26 2.26 0 0 1-2.26-2.26V2.26a2.26 2.26 0 0 1 2.26-2.26z"/><path fill="#fff" fill-opacity=".36" d="M8.98 0L14.6 5.62H10.22a1.24 1.24 0 0 1-1.24-1.24z"/><svg x="2.58" y="7.37" width="9.43" height="9.43" viewBox="0 0 24 24"><path fill="#fff" d="M17 10.5V7c0-.55-.45-1-1-1H4c-.55 0-1 .45-1 1v10c0 .55.45 1 1 1h12c.55 0 1-.45 1-1v-3.5l4 4v-11l-4 4z"/><circle cx="10" cy="12" r="2.6" fill="#f40500"/></svg></svg><div class="ab t nm" style="left:66.500px;top:151px">paradise.m<i>...</i></div></div>
<div class="card" style="left:1199px;top:930px"><div class="ph"><svg width="193" height="130" viewBox="0 0 192 129" preserveAspectRatio="none" style="display:block"><defs><linearGradient id="g33" x1="0" y1="0" x2="1" y2="0"><stop offset="0" stop-color="#a48e77"/><stop offset="0.5" stop-color="#ab957d"/><stop offset="1" stop-color="#a38b72"/></linearGradient><filter id="f34" x="-20%" y="-20%" width="140%" height="140%"><feGaussianBlur stdDeviation="0.9"/></filter><filter id="f35" x="-20%" y="-20%" width="140%" height="140%"><feGaussianBlur stdDeviation="2"/></filter></defs><rect x="0" y="0" width="192" height="129" fill="url(#g33)" /><g filter="url(#f35)"><rect x="-4" y="-4" width="44" height="54" fill="#c3b3ad" /><rect x="2" y="66" width="64" height="40" fill="#b3a596" /><rect x="8" y="78" width="28" height="6" fill="#8f8478" /></g><g filter="url(#f34)"><polygon points="0,51 66,49 68,67 0,69" fill="#80603a" /><polygon points="12,55 46,54 46,59 12,60" fill="#c9ad88" /><rect x="0" y="68" width="4" height="61" fill="#8a6a42" /><polygon points="100,14 112,13 126,18 136,32 142,56 150,90 146,104 138,108 126,100 80,100 70,102 62,94 66,72 72,52 82,30 90,20" fill="#c7ac87" /><polygon points="96,18 110,15 122,20 112,24 100,26 92,30" fill="#7a664b" /><polygon points="124,30 134,36 140,60 146,92 138,100 132,70" fill="#b59a76" /><polygon points="86,36 100,28 116,30 124,44 126,70 120,90 108,100 96,98 84,84 80,64 82,46" fill="#dcae93" /><polygon points="80,60 86,40 84,84" fill="#b98d70" /><ellipse cx="87" cy="54" rx="5" ry="1.8" fill="#5a4a48" /><ellipse cx="112" cy="53" rx="5" ry="1.8" fill="#5a4a48" /><polygon points="92,80 104,78 112,81 104,86 96,86" fill="#c47f72" /><polygon points="98,60 104,58 106,70 98,72" fill="#c99678" /><polygon points="86,96 120,94 126,108 106,129 90,118 82,108" fill="#d3a385" /><polygon points="104,129 124,104 140,110 156,120 168,129" fill="#191717" /><polygon points="74,106 88,104 90,112 80,112" fill="#191717" /><polygon points="42,98 58,100 72,106 88,124 90,129 40,129 46,116" fill="#d4a384" /><ellipse cx="44" cy="99" rx="3" ry="1.8" fill="#d89a30" /><ellipse cx="10" cy="93" rx="3" ry="2" fill="#d88a40" /><polygon points="0,104 8,100 10,129 0,129" fill="#caa084" /><polygon points="8,96 26,91 42,94 48,104 62,110 60,116 48,118 42,129 8,129 6,110" fill="#1b1b1b" /><ellipse cx="26" cy="124" rx="10" ry="6" fill="#55585c" opacity=".7"/><polygon points="162,122 176,116 192,116 192,129 158,129" fill="#bcb4ad" /></g></svg></div><svg class="ab" style="left:26.0px;top:153.3px" width="14.6" height="19.5" viewBox="0 0 14.6 19.5"><path fill="#19c45c" d="M2.26 0H8.98L14.6 5.62V17.24a2.26 2.26 0 0 1-2.26 2.26H2.26a2.26 2.26 0 0 1-2.26-2.26V2.26a2.26 2.26 0 0 1 2.26-2.26z"/><path fill="#fff" fill-opacity=".36" d="M8.98 0L14.6 5.62H10.22a1.24 1.24 0 0 1-1.24-1.24z"/><rect x="4.04" y="9.93" width="6.51" height="4.72" rx="0.67" fill="#fff"/><path fill="#19c45c" d="M4.83 13.86l1.46 -1.91 1.01 1.12 0.67 -0.67 1.80 1.46z"/><circle cx="5.84" cy="11.27" r="0.54" fill="#19c45c"/></svg><div class="ab t nm" style="left:66.500px;top:151px">photo.jpeg</div></div>
<div id="rp" class="ab"></div>
<svg class="ab" style="left:1687.0px;top:144.0px" width="23" height="30" viewBox="0 0 23 30"><path fill="#19c45c" d="M3.56 0H14.14L23 8.86V26.43a3.56 3.56 0 0 1-3.56 3.56H3.56a3.56 3.56 0 0 1-3.56-3.56V3.56a3.56 3.56 0 0 1 3.56-3.56z"/><path fill="#fff" fill-opacity=".36" d="M14.14 0L23 8.86H16.11a1.96 1.96 0 0 1-1.96-1.96z"/><rect x="6.37" y="15.18" width="10.26" height="7.43" rx="1.06" fill="#fff"/><path fill="#19c45c" d="M7.61 21.38l2.30 -3.01 1.59 1.77 1.06 -1.06 2.83 2.30z"/><circle cx="9.20" cy="17.31" r="0.85" fill="#19c45c"/></svg>
<div class="ab t " style="left:1739px;top:140.0px;font-size:28px;line-height:36px;color:#262626;">work.jpeg</div>
<svg class="ab" style="left:1976.5px;top:145.0px" width="29" height="29" viewBox="0 0 24 24" ><path fill="#5c5c5c" d="M19 6.41L17.59 5 12 10.59 6.41 5 5 6.41 10.59 12 5 17.59 6.41 19 12 13.41 17.59 19 19 17.59 13.41 12z"/></svg>
<div class="ab" style="left:1682px;top:243px;width:336px;height:240px;border-radius:9px;overflow:hidden"><svg width="336" height="240" viewBox="0 -4 192 137" preserveAspectRatio="none" style="display:block"><defs><linearGradient id="g36" x1="0" y1="0" x2="1" y2="0"><stop offset="0" stop-color="#e4dad1"/><stop offset="0.3" stop-color="#ece5de"/><stop offset="0.6" stop-color="#eee8e2"/><stop offset="0.72" stop-color="#f3efeb"/><stop offset="1" stop-color="#f5f2ef"/></linearGradient><linearGradient id="g37" x1="0" y1="0" x2="0" y2="1"><stop offset="0" stop-color="#a8a39e"/><stop offset="0.5" stop-color="#9c9792"/><stop offset="1" stop-color="#8f8a85"/></linearGradient><filter id="f38" x="-20%" y="-20%" width="140%" height="140%"><feGaussianBlur stdDeviation="0.8"/></filter><filter id="f39" x="-20%" y="-20%" width="140%" height="140%"><feGaussianBlur stdDeviation="2.5"/></filter><filter id="f40" x="-20%" y="-20%" width="140%" height="140%"><feGaussianBlur stdDeviation="1.4"/></filter></defs><rect x="0" y="-6" width="192" height="142" fill="url(#g36)" /><g filter="url(#f39)"><polygon points="0,34 60,38 52,108 0,112" fill="#f0ebe6" opacity=".8"/><polygon points="0,60 40,50 40,70 0,84" fill="#d9cfc6" opacity=".6"/><rect x="122" y="6" width="18" height="98" fill="#f6f3f0" /></g><g filter="url(#f38)"><rect x="155" y="12" width="42" height="86" fill="#fdfdfd" /><rect x="147" y="10" width="9" height="90" fill="#d4cfcb" /><rect x="138.3" y="8" width="8.4" height="89" fill="#4a4644" /><rect x="141.5" y="10" width="1.5" height="85" fill="#6a6664" /><polygon points="122,-6 192,-6 192,8 150,8 122,6" fill="#ddd2ca" /><polygon points="23,-4 97,-1 97,3.500 23,1" fill="#cfa468" /><polygon points="81,3 91,3.500 86,13 83,13" fill="#2b2927" /><polygon points="16,-6 24,-6 21,19 17,19" fill="#2b2927" /><polygon points="17,27 66,29.500 66,33 17,31" fill="#d4a66a" /><polygon points="17,31 24,32 20,52 17,52" fill="#2b2927" /><polygon points="0,22 6,23.500 6,27 0,26" fill="#2b2927" /><ellipse cx="35" cy="11" rx="8" ry="6" fill="#3d5c2c" /><ellipse cx="42" cy="9" rx="4" ry="4" fill="#4a6c34" /><rect x="27" y="16" width="5" height="12" fill="#3a3a30" /><rect x="32" y="17" width="13" height="11" fill="#c08a55" /><ellipse cx="56" cy="19" rx="8" ry="3.5" fill="#41602f" /><rect x="56" y="22" width="9" height="8" fill="#e9e4df" /><ellipse cx="37" cy="92" rx="2.5" ry="5" fill="#4b6a38" /><ellipse cx="10" cy="95" rx="9" ry="2.5" fill="#f3efea" opacity=".8"/><polygon points="0,114 43,111 46,136 0,136" fill="#c6a071" /><polygon points="23,123 44,120.500 46,136 24,136" fill="#2a3242" /></g><g filter="url(#f40)"><polygon points="70,36 74,22 82,13 92,10 102,12 109,20 109,32 104,44 80,50 74,60 68,58 62,52 64,44" fill="#3a271e" /><ellipse cx="67" cy="48" rx="7" ry="9" fill="#3a271e" /><ellipse cx="105" cy="56" rx="3" ry="6" fill="#4a342a" /><polygon points="78,34 88,26 100,24 108,30 110,44 107,56 100,64 90,66 82,58 78,46" fill="#e0b29a" /><polygon points="78,36 84,30 82,58 78,46" fill="#c4947c" opacity=".8"/><polygon points="74,24 90,14 104,18 109,30 100,27 88,30 80,40 76,50 72,40" fill="#3a271e" /><polygon points="62,68 76,60 100,62 102,68 96,84 86,94 76,80" fill="#e2b8a1" /><polygon points="76,62 92,64 88,72 80,70" fill="#c99f88" opacity=".7"/><polygon points="94,56 101,55 98,58.500" fill="#b06a66" /><polygon points="88,42 95,41 95,42.500 88,43.500" fill="#5a3a30" /><polygon points="101,41 107,41 107,42.500 101,42.500" fill="#5a3a30" /><polygon points="41,80 48,68 58,64 68,66 86,94 99,66 112,70 120,84 126,100 118,112 116,136 46,136 42,110" fill="url(#g37)" /><polygon points="58,64 68,66 86,94 99,66 95,66 86,87 71,65" fill="#b6b1ad" /><polygon points="41,82 53,70 61,100 66,136 46,136 42,110" fill="#8a8580" /><polygon points="66,104 98,96 110,136 70,136" fill="#aaa5a0" opacity=".6"/><polygon points="112,72 120,84 126,100 118,112 114,96" fill="#87827d" /></g><g filter="url(#f38)"><polygon points="118,101 192,94 192,136 114,136" fill="#dcd8d6" /><polygon points="118,101 192,94 192,97.500 118,104.500" fill="#edeae8" /><ellipse cx="160" cy="132" rx="3" ry="3.5" fill="#b9a89e" /></g></svg></div>
<div class="ab" style="left:1682px;top:509px;width:49px;height:49px;border-radius:50%;overflow:hidden"><svg width="49" height="49" viewBox="0 0 54 54" preserveAspectRatio="none" style="display:block"><defs><linearGradient id="g41" x1="0" y1="0" x2="1" y2="0"><stop offset="0" stop-color="#2f78d0"/><stop offset="0.22" stop-color="#8aa6d6"/><stop offset="0.45" stop-color="#b4bed2"/><stop offset="0.7" stop-color="#9fb2d8"/><stop offset="1" stop-color="#2f7ad4"/></linearGradient><filter id="f42" x="-20%" y="-20%" width="140%" height="140%"><feGaussianBlur stdDeviation="0.6"/></filter><filter id="f43" x="-20%" y="-20%" width="140%" height="140%"><feGaussianBlur stdDeviation="1.6"/></filter></defs><rect x="0" y="0" width="54" height="54" fill="#6b6c6e" /><g filter="url(#f43)"><rect x="-2" y="-2" width="58" height="25" fill="url(#g41)" /><polygon points="10,20 24,-2 34,-2 22,20" fill="#c9d0de" opacity=".8"/><polygon points="26,16 40,-2 48,-2 34,16" fill="#c2cade" opacity=".6"/><polygon points="-2,30 20,25 26,56 -2,56" fill="#55565a" /><polygon points="30,30 56,36 56,56 34,56" fill="#77787a" /></g><g filter="url(#f42)"><polygon points="24,20.500 56,19.500 56,27 26,25" fill="#8c7a4b" /><polygon points="26,18 56,16.500 56,21 26,21.500" fill="#333629" /><polygon points="-2,23 20,21.500 20,24 -2,27" fill="#857246" /><polygon points="30,27 56,31 56,33 30,28.500" fill="#b59a3a" opacity=".8"/><ellipse cx="22.3" cy="16.8" rx="3.5" ry="4" fill="#15151b" /><polygon points="18,21 24,19.500 28,25 32,29 30.500,31 26,28.500 27,38 22,41 18,33" fill="#1a1a20" /><ellipse cx="19.5" cy="34.5" rx="2.3" ry="1.8" fill="#c79a80" /><ellipse cx="18" cy="40" rx="6.5" ry="2.4" fill="#2a2b2c" /><polygon points="24,39 30,35 36,32.500 39,35 38,49 33,52 28,46" fill="#e8ebf2" /><polygon points="30,33 34,31 36,39 32,41" fill="#8b93a5" /><polygon points="28,44 36,42 36,46 30,48" fill="#9aa0ae" /></g></svg></div>
<div class="ab t " style="left:1682px;top:585.5px;font-size:18.2px;line-height:24px;color:#505050;">Type</div>
<div class="ab t " style="left:1843px;top:585.5px;font-size:18.2px;line-height:24px;color:#262626;">Image</div>
<div class="ab t " style="left:1682px;top:625.5px;font-size:18.2px;line-height:24px;color:#505050;">Size</div>
<div class="ab t " style="left:1843px;top:625.5px;font-size:18.2px;line-height:24px;color:#262626;">5.1 MB</div>
<div class="ab t " style="left:1682px;top:665.5px;font-size:18.2px;line-height:24px;color:#505050;">Storage Used</div>
<div class="ab t " style="left:1843px;top:665.5px;font-size:18.2px;line-height:24px;color:#262626;">5.1 MB</div>
<div class="ab t " style="left:1682px;top:708.5px;font-size:18.2px;line-height:24px;color:#505050;">Location</div>
<div class="ab t " style="left:1682px;top:750.5px;font-size:18.2px;line-height:24px;color:#505050;">Owner</div>
<div class="ab t " style="left:1682px;top:791.5px;font-size:18.2px;line-height:24px;color:#505050;">Last Updated</div>
<div class="ab t " style="left:1843px;top:791.5px;font-size:18.2px;line-height:24px;color:#262626;">March 7, 2022</div>
<div class="ab t " style="left:1682px;top:831.5px;font-size:18.2px;line-height:24px;color:#505050;">Created</div>
<div class="ab t " style="left:1843px;top:831.5px;font-size:18.2px;line-height:24px;color:#262626;">March 6, 2022</div>
<svg class="ab" style="left:1842.5px;top:704.5px" width="31" height="31" viewBox="0 0 24 24" ><path fill="#6d6d6d" d="M9.17 6l2 2H20v10H4V6h5.17M10 4H4c-1.1 0-1.99.9-1.99 2L2 18c0 1.1.9 2 2 2h16c1.1 0 2-.9 2-2V8c0-1.1-.9-2-2-2h-8l-2-2z"/></svg>
<div class="ab t md" style="left:1880px;top:711.0px;font-size:18px;line-height:23px;color:#262626;">All Files</div>
<div class="ab t " style="left:1682px;top:884.5px;font-size:18.2px;line-height:24px;color:#505050;letter-spacing:.35px">Add a description</div>
<svg class="ab" style="left:1927.0px;top:882.5px" width="30" height="30" viewBox="0 0 24 24" ><path fill="#1c1c1c" d="M14.06 9.02l.92.92L5.92 19H5v-.92l9.06-9.06M17.66 3c-.25 0-.51.1-.7.29l-1.83 1.83 3.75 3.75 1.83-1.83c.39-.39.39-1.02 0-1.41l-2.34-2.34c-.2-.2-.45-.29-.71-.29zm-3.6 3.19L3 17.25V21h3.75L17.81 9.94l-3.75-3.75z"/></svg>
<div class="ab" style="left:1529px;top:1429px;width:507px;height:167px;background:#f7f8fa;box-shadow:0 3px 10px rgba(0,0,0,.32),0 0 3px rgba(0,0,0,.18)"></div>
<div class="ab" style="left:1529px;top:1429px;width:507px;height:74px;background:#5b2be8"></div>
<div class="ab t " style="left:1553px;top:1453.5px;font-size:18.9px;line-height:25px;color:#fff;">1 items uploaded</div>
<svg class="ab" style="left:1927.0px;top:1448.0px" width="36" height="36" viewBox="0 0 24 24" ><path fill="#fff" d="M16.59 8.59L12 13.17 7.41 8.59 6 10l6 6 6-6z"/></svg>
<svg class="ab" style="left:1983.5px;top:1451.5px" width="31" height="31" viewBox="0 0 24 24" ><path fill="#fff" d="M19 6.41L17.59 5 12 10.59 6.41 5 5 6.41 10.59 12 5 17.59 6.41 19 12 13.41 17.59 19 19 17.59 13.41 12z"/></svg>
<svg class="ab" style="left:1557.0px;top:1529.0px" width="31" height="41" viewBox="0 0 31 41"><path fill="#19c45c" d="M4.80 0H19.06L31 11.94V36.20a4.80 4.80 0 0 1-4.80 4.80H4.80a4.80 4.80 0 0 1-4.80-4.80V4.80a4.80 4.80 0 0 1 4.80-4.80z"/><path fill="#fff" fill-opacity=".36" d="M19.06 0L31 11.94H21.71a2.64 2.64 0 0 1-2.64-2.64z"/><rect x="8.58" y="20.82" width="13.83" height="10.02" rx="1.43" fill="#fff"/><path fill="#19c45c" d="M10.25 29.17l3.10 -4.05 2.15 2.38 1.43 -1.43 3.82 3.10z"/><circle cx="12.40" cy="23.68" r="1.14" fill="#19c45c"/></svg>
<div class="ab t " style="left:1609px;top:1528.5px;font-size:18.5px;line-height:24px;color:#2a2a2a;">pexels-vlada-karpovich-4668509.jpeg</div>
<div class="ab" style="left:1609px;top:1563px;width:407px;height:4.500px;border-radius:2px;background:#5b2be8"></div>
<svg class="ab" style="left:1986.0px;top:1523.5px" width="30" height="30" viewBox="0 0 24 24" ><path fill="#3db61f" d="M16.59 7.58L10 14.17l-3.59-3.58L5 12l5 5 8-8zM12 2C6.48 2 2 6.48 2 12s4.48 10 10 10 10-4.48 10-10S17.52 2 12 2zm0 18c-4.42 0-8-3.58-8-8s3.58-8 8-8 8 3.58 8 8-3.58 8-8 8z"/></svg>
</body></html>
